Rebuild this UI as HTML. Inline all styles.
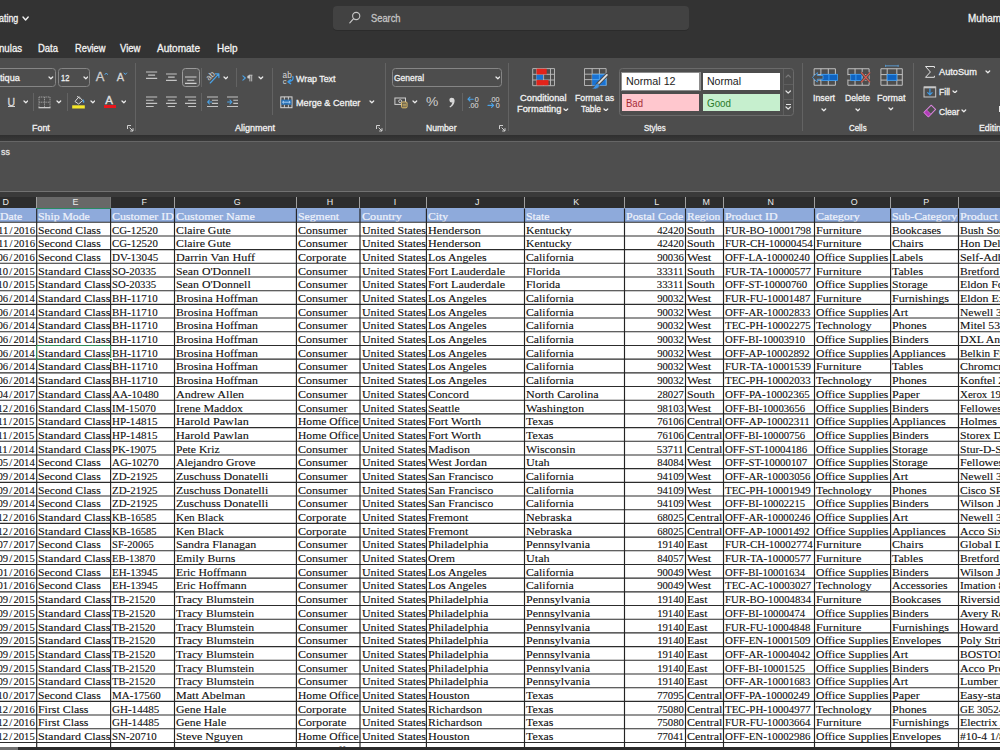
<!DOCTYPE html>
<html><head><meta charset="utf-8"><title>Excel</title><style>*{box-sizing:border-box}
html,body{margin:0;padding:0}
body{width:1000px;height:750px;overflow:hidden;background:#333333;position:relative;font-family:"Liberation Sans",sans-serif;color:#fff}
#colhdr{position:absolute;left:0;top:196.5px;width:1000px;height:12px;background:#2d2d2d;overflow:hidden}
.ch{position:absolute;top:0;height:12px;border-right:1px solid #a0a0a0;color:#ececec;font-size:8.9px;line-height:11.6px;text-align:center;padding-left:4px}
.ch.sel{background:#686868;border-bottom:1.5px solid #2e8b63;border-right-color:#777}
#grid{position:absolute;left:0;top:0;width:1000px;height:747.5px;overflow:hidden;pointer-events:none}
.c{position:absolute;overflow:hidden;white-space:nowrap;font-family:"Liberation Serif",serif;font-size:11.15px;line-height:14px;color:#0c0c0c;-webkit-text-stroke:0.1px #222}
.c.h{color:#eef2fb;-webkit-text-stroke:0.2px #eef2fb}
.t{position:absolute;left:1.3px;display:inline-block;transform-origin:0 50%}
.t.r{left:auto;right:1.6px;transform-origin:100% 50%}
#sheet{position:absolute;left:0;width:1000px;background:#fff}
#hrow{position:absolute;left:0;width:1000px;background:#8eaadb}
#lines{position:absolute;left:0;top:0}
#selbox{position:absolute;left:35.6px;top:344.8px;width:75.6px;height:15.4px;border:1.4px solid #2e8b57;border-right-width:1.9px}
#selh{position:absolute;left:109.2px;top:358px;width:3.6px;height:3.6px;background:#2e8b57;border:0.6px solid #fff}
#botbar{position:absolute;left:0;top:747.3px;width:1000px;height:2.7px;background:#2b2b2b}
#botl{position:absolute;left:0;top:0;width:18px;height:2.7px;background:#707070}
.ab{position:absolute}
.lb{position:absolute;white-space:nowrap;line-height:16px;-webkit-text-stroke:0.3px currentColor;transform-origin:0 50%;display:inline-block}
#titlebar{position:absolute;left:0;top:0;width:1000px;height:59px;background:#333333}
#ribbon{position:absolute;left:0;top:58px;width:1000px;height:77px;background:#4d4d4d}
#rshadow{position:absolute;left:0;top:135px;width:1000px;height:6.3px;background:linear-gradient(#2f2f2f,#383838)}
#fbar{position:absolute;left:0;top:141.3px;width:1000px;height:51px;background:#4e4e4e;border-top:1px solid #666;border-bottom:1px solid #727272}
#fgap{position:absolute;left:0;top:192px;width:1000px;height:5px;background:#3a3a3a}
.box{border:1px solid #858585;border-radius:3.5px}
#selline{position:absolute;left:36.2px;top:207.5px;width:74.9px;height:1.5px;background:#2a8a62}
</style></head><body>
<div id="titlebar"></div><div id="ribbon"></div><div id="rshadow"></div><div id="fbar"></div><div id="fgap"></div>
<div class="ab" style="left:333px;top:6px;width:356px;height:23.8px;background:#424242;border-radius:4px;box-shadow:0 0.8px 0.5px #2a2a2a"></div>
<svg class="ab" style="left:348px;top:10px" width="14" height="16" viewBox="0 0 14 16"><circle cx="8.2" cy="6" r="3.6" fill="none" stroke="#c8c8c8" stroke-width="1.1"/><path d="M5.6 8.7 L1.8 12.8" stroke="#c8c8c8" stroke-width="1.2" stroke-linecap="round"/></svg>
<svg class="ab" style="left:22.4px;top:16.0px" width="7.2" height="5.0"><path d="M1 1 L3.60 4.00 L6.20 1" fill="none" stroke="#f0f0f0" stroke-width="1.4" stroke-linecap="round" stroke-linejoin="round"/></svg>
<div class="ab box" style="left:-10px;top:68px;width:65.5px;height:18.6px"></div>
<svg class="ab" style="left:48.2px;top:76.0px" width="5.7" height="3.8"><path d="M1 1 L2.85 2.75 L4.70 1" fill="none" stroke="#ececec" stroke-width="1.25" stroke-linecap="round" stroke-linejoin="round"/></svg>
<div class="ab box" style="left:58.1px;top:68px;width:32.3px;height:18.6px"></div>
<svg class="ab" style="left:82.6px;top:76.0px" width="5.7" height="3.8"><path d="M1 1 L2.85 2.75 L4.70 1" fill="none" stroke="#ececec" stroke-width="1.25" stroke-linecap="round" stroke-linejoin="round"/></svg>
<span class="lb" style="left:95.8px;top:69px;font-size:13px;color:#cfcfcf;line-height:16px">A</span>
<svg class="ab" style="left:103.5px;top:71.5px" width="4.6" height="3.5"><path d="M1 2.50 L2.30 1 L3.60 2.50" fill="none" stroke="#58aef0" stroke-width="1" stroke-linecap="round" stroke-linejoin="round"/></svg>
<span class="lb" style="left:116.8px;top:70px;font-size:11px;color:#d8d8d8;line-height:14px">A</span>
<svg class="ab" style="left:123.2px;top:71.8px" width="4.6" height="3.5"><path d="M1 1 L2.30 2.50 L3.60 1" fill="none" stroke="#58aef0" stroke-width="1" stroke-linecap="round" stroke-linejoin="round"/></svg>
<span class="lb" style="left:7.4px;top:93.6px;font-size:10.5px;color:#d8d8d8;line-height:16px">U</span>
<div class="ab" style="left:7.6px;top:106px;width:7px;height:1px;background:#d0d0d0"></div>
<svg class="ab" style="left:22.6px;top:99.9px" width="5.7" height="3.8"><path d="M1 1 L2.85 2.75 L4.70 1" fill="none" stroke="#ececec" stroke-width="1.25" stroke-linecap="round" stroke-linejoin="round"/></svg>
<div class="ab" style="left:33.1px;top:93px;width:1px;height:18px;background:#636363"></div>
<svg class="ab" style="left:38.4px;top:95.6px" width="13" height="13" viewBox="0 0 13 13"><path d="M1 1 H12 M1 6.2 H12 M1 1 V11.6 M6.5 1 V11.6 M12 1 V11.6" fill="none" stroke="#9a9a9a" stroke-width="1" stroke-dasharray="1.2 0.6"/><path d="M0.5 11.7 H12.5" stroke="#d8d8d8" stroke-width="1.2"/></svg>
<svg class="ab" style="left:55.9px;top:99.9px" width="5.7" height="3.8"><path d="M1 1 L2.85 2.75 L4.70 1" fill="none" stroke="#ececec" stroke-width="1.25" stroke-linecap="round" stroke-linejoin="round"/></svg>
<div class="ab" style="left:67.3px;top:93px;width:1px;height:18px;background:#636363"></div>
<svg class="ab" style="left:72px;top:94.5px" width="14" height="15" viewBox="0 0 14 15"><path d="M3 6.5 L7 1.6 L10.6 5.6 L6.6 9 Z" fill="none" stroke="#d8d8d8" stroke-width="1"/><path d="M5.2 1.2 L7.6 3.6" stroke="#d8d8d8" stroke-width="1"/><path d="M11.2 4.6 Q12.6 6.6 11.8 7.8 Q10.6 7.6 11.2 4.6" fill="#4aa3e8" stroke="#4aa3e8" stroke-width="0.6"/><rect x="0.2" y="10.3" width="12.6" height="3.2" fill="#f5e72a"/></svg>
<svg class="ab" style="left:89.7px;top:99.9px" width="5.7" height="3.8"><path d="M1 1 L2.85 2.75 L4.70 1" fill="none" stroke="#ececec" stroke-width="1.25" stroke-linecap="round" stroke-linejoin="round"/></svg>
<span class="lb" style="left:105.2px;top:92.2px;font-size:11.5px;color:#e0e0e0;line-height:16px">A</span>
<div class="ab" style="left:103.6px;top:104.8px;width:12.4px;height:3.2px;background:#e8161c"></div>
<svg class="ab" style="left:120.7px;top:99.9px" width="5.7" height="3.8"><path d="M1 1 L2.85 2.75 L4.70 1" fill="none" stroke="#ececec" stroke-width="1.25" stroke-linecap="round" stroke-linejoin="round"/></svg>
<svg class="ab" style="left:126.5px;top:124.6px" width="7" height="7" viewBox="0 0 7 7"><path d="M0.5 4 V0.5 H4" fill="none" stroke="#d0d0d0" stroke-width="1"/><path d="M2.6 2.6 L6 6 M6 3.2 V6 H3.2" fill="none" stroke="#d0d0d0" stroke-width="1"/></svg>
<div class="ab" style="left:135.1px;top:63px;width:1px;height:68px;background:#636363"></div>
<svg class="ab" style="left:144.80px;top:69.60px" width="13.20" height="10.30"><path d="M1.00 2.00 H12.20 M3.10 5.10 H10.10 M1.00 8.30 H12.20" stroke="#c4c4c4" stroke-width="1.15" fill="none"/></svg>
<svg class="ab" style="left:164.80px;top:72.00px" width="12.80" height="10.30"><path d="M1.00 2.00 H11.80 M3.10 5.10 H9.70 M1.00 8.30 H11.80" stroke="#c4c4c4" stroke-width="1.15" fill="none"/></svg>
<div class="ab box" style="left:182.2px;top:68px;width:17.5px;height:18.6px;border-color:#9a9a9a;background:#555"></div>
<svg class="ab" style="left:184.00px;top:75.10px" width="13.50" height="10.30"><path d="M1.00 2.00 H12.50 M3.20 5.20 H10.30 M1.00 8.30 H12.50" stroke="#d0d0d0" stroke-width="1.15" fill="none"/></svg>
<div class="ab" style="left:201.3px;top:68px;width:1px;height:18.5px;background:#636363"></div>
<svg class="ab" style="left:206px;top:70px" width="15" height="15" viewBox="0 0 15 15"><path d="M4.2 13 L12.6 4.2 M9.2 3.9 H12.9 V7.6" fill="none" stroke="#4aa3e8" stroke-width="1.15" stroke-linecap="round" stroke-linejoin="round"/><g transform="rotate(-45 5 6)"><text x="0" y="8.2" font-family="Liberation Sans" font-size="8.2" fill="#d2d2d2">ab</text></g></svg>
<svg class="ab" style="left:222.8px;top:76.0px" width="5.7" height="3.8"><path d="M1 1 L2.85 2.75 L4.70 1" fill="none" stroke="#ececec" stroke-width="1.25" stroke-linecap="round" stroke-linejoin="round"/></svg>
<div class="ab" style="left:235.6px;top:68px;width:1px;height:18.5px;background:#636363"></div>
<svg class="ab" style="left:241.5px;top:73.5px" width="12" height="9" viewBox="0 0 12 9"><path d="M0.9 1.9 L3.3 4 L0.9 6.1" fill="none" stroke="#4aa3e8" stroke-width="1.1" stroke-linecap="round" stroke-linejoin="round"/><path d="M7.9 1.2 H6.9 A1.7 1.7 0 0 0 6.9 4.6 H7.9 Z" fill="#cfcfcf"/><path d="M7.9 1.2 V7.4 M9.7 1.2 V7.4 M7 1.2 H10.4" fill="none" stroke="#cfcfcf" stroke-width="0.85"/></svg>
<svg class="ab" style="left:258.3px;top:76.0px" width="5.7" height="3.8"><path d="M1 1 L2.85 2.75 L4.70 1" fill="none" stroke="#ececec" stroke-width="1.25" stroke-linecap="round" stroke-linejoin="round"/></svg>
<div class="ab" style="left:272.0px;top:67.7px;width:1px;height:46.89999999999999px;background:#636363"></div>
<svg class="ab" style="left:144.80px;top:94.70px" width="13.20" height="13.50"><path d="M1.00 2.00 H12.20 M1.00 5.20 H8.70 M1.00 8.30 H12.20 M1.00 11.50 H8.70" stroke="#c4c4c4" stroke-width="1.15" fill="none"/></svg>
<svg class="ab" style="left:164.80px;top:94.70px" width="12.80" height="13.50"><path d="M1.00 2.00 H11.80 M2.70 5.20 H10.10 M1.00 8.30 H11.80 M2.70 11.50 H10.10" stroke="#c4c4c4" stroke-width="1.15" fill="none"/></svg>
<svg class="ab" style="left:184.40px;top:94.70px" width="13.10" height="13.50"><path d="M1.00 2.00 H12.10 M4.10 5.20 H12.10 M1.00 8.30 H12.10 M4.10 11.50 H12.10" stroke="#c4c4c4" stroke-width="1.15" fill="none"/></svg>
<div class="ab" style="left:201.3px;top:93px;width:1px;height:18px;background:#636363"></div>
<svg class="ab" style="left:206.40px;top:94.70px" width="13.00" height="13.50"><path d="M1.00 2.00 H12.00 M5.90 5.20 H12.00 M5.90 8.30 H12.00 M1.00 11.50 H12.00" stroke="#c4c4c4" stroke-width="1.15" fill="none"/></svg>
<svg class="ab" style="left:207px;top:98.5px" width="6" height="6" viewBox="0 0 6 6"><path d="M0.6 3 H4.8 M2.4 1 L0.6 3 L2.4 5" fill="none" stroke="#4aa3e8" stroke-width="1.1" stroke-linecap="round" stroke-linejoin="round"/></svg>
<svg class="ab" style="left:226.00px;top:94.70px" width="13.00" height="13.50"><path d="M1.00 2.00 H12.00 M7.30 5.20 H12.00 M7.30 8.30 H12.00 M1.00 11.50 H12.00" stroke="#c4c4c4" stroke-width="1.15" fill="none"/></svg>
<svg class="ab" style="left:226.6px;top:98.5px" width="6" height="6" viewBox="0 0 6 6"><path d="M0.6 3 H4.8 M3 1 L4.8 3 L3 5" fill="none" stroke="#4aa3e8" stroke-width="1.1" stroke-linecap="round" stroke-linejoin="round"/></svg>
<svg class="ab" style="left:281.5px;top:71px" width="14" height="15" viewBox="0 0 14 15"><text x="0.6" y="7" font-family="Liberation Sans" font-size="8.2" fill="#d8d8d8">ab</text><text x="0.7" y="13" font-family="Liberation Sans" font-size="7.6" fill="#d8d8d8">c</text><path d="M10.8 5.6 Q12.4 9.6 6.6 10.9 M8.4 8.8 L6 10.9 L8.6 12.7" fill="none" stroke="#3f9be6" stroke-width="1.4" stroke-linecap="round" stroke-linejoin="round"/></svg>
<svg class="ab" style="left:280px;top:95.5px" width="13" height="13" viewBox="0 0 13 13"><rect x="0.8" y="0.9" width="11.2" height="10.8" fill="none" stroke="#d8d8d8" stroke-width="1"/><rect x="1.3" y="3.6" width="10.2" height="5.2" fill="#2a72b5"/><path d="M4.4 0.9 V3.6 M8.4 0.9 V3.6 M4.4 8.8 V11.7 M8.4 8.8 V11.7" stroke="#d8d8d8" stroke-width="0.9"/><path d="M2.6 6.2 H10.2 M4 4.9 L2.6 6.2 L4 7.5 M8.8 4.9 L10.2 6.2 L8.8 7.5" fill="none" stroke="#bfe0ff" stroke-width="0.8"/></svg>
<svg class="ab" style="left:369.4px;top:100.4px" width="5.7" height="3.8"><path d="M1 1 L2.85 2.75 L4.70 1" fill="none" stroke="#ececec" stroke-width="1.25" stroke-linecap="round" stroke-linejoin="round"/></svg>
<svg class="ab" style="left:375.8px;top:124.6px" width="7" height="7" viewBox="0 0 7 7"><path d="M0.5 4 V0.5 H4" fill="none" stroke="#d0d0d0" stroke-width="1"/><path d="M2.6 2.6 L6 6 M6 3.2 V6 H3.2" fill="none" stroke="#d0d0d0" stroke-width="1"/></svg>
<div class="ab" style="left:385.0px;top:63px;width:1px;height:68px;background:#636363"></div>
<div class="ab box" style="left:391.7px;top:68px;width:110.8px;height:18.6px"></div>
<svg class="ab" style="left:494.8px;top:76.0px" width="5.7" height="3.8"><path d="M1 1 L2.85 2.75 L4.70 1" fill="none" stroke="#ececec" stroke-width="1.25" stroke-linecap="round" stroke-linejoin="round"/></svg>
<svg class="ab" style="left:394px;top:96.8px" width="14" height="12" viewBox="0 0 14 12"><rect x="0.9" y="1" width="10.6" height="6.4" fill="none" stroke="#d0d0d0" stroke-width="1"/><circle cx="6.2" cy="4.2" r="1.5" fill="none" stroke="#d0d0d0" stroke-width="0.9"/><rect x="7.6" y="5" width="5.4" height="5.8" rx="1" fill="#4d4d4d" stroke="#e8c46a" stroke-width="1"/><path d="M8.6 7.2 H12 M8.6 8.9 H12" stroke="#e8c46a" stroke-width="0.9"/></svg>
<svg class="ab" style="left:412.1px;top:99.9px" width="5.7" height="3.8"><path d="M1 1 L2.85 2.75 L4.70 1" fill="none" stroke="#ececec" stroke-width="1.25" stroke-linecap="round" stroke-linejoin="round"/></svg>
<span class="lb" style="left:425.6px;top:92.8px;font-size:13.6px;color:#cdcdcd;line-height:18px;transform:scaleX(1.02);-webkit-text-stroke:0">%</span>
<svg class="ab" style="left:447.5px;top:96.5px" width="9" height="12" viewBox="0 0 9 12"><path d="M3.8 0.8 A2.3 2.3 0 1 0 4.4 5.3 Q3.8 8.4 1.4 9.8 L2.2 10.6 Q7 7.8 6.6 3 Q6.2 0.8 3.8 0.8Z" fill="#d8d8d8"/></svg>
<div class="ab" style="left:462.0px;top:93px;width:1px;height:18px;background:#636363"></div>
<svg class="ab" style="left:467px;top:95.5px" width="13" height="13" viewBox="0 0 13 13"><path d="M1 3.2 H6.2 M3 1.2 L1 3.2 L3 5.2" fill="none" stroke="#4aa3e8" stroke-width="1.1" stroke-linecap="round" stroke-linejoin="round"/><text x="7.8" y="5.8" font-family="Liberation Sans" font-size="7.2" fill="#e2e2e2">0</text><text x="1.6" y="11.9" font-family="Liberation Sans" font-size="7.2" fill="#e2e2e2">.00</text></svg>
<svg class="ab" style="left:486.5px;top:95.5px" width="14" height="13" viewBox="0 0 14 13"><text x="2.6" y="5.8" font-family="Liberation Sans" font-size="7.2" fill="#e2e2e2">.00</text><path d="M1 9.4 H6.6 M4.6 7.4 L6.6 9.4 L4.6 11.4" fill="none" stroke="#4aa3e8" stroke-width="1.1" stroke-linecap="round" stroke-linejoin="round"/><text x="8.8" y="11.9" font-family="Liberation Sans" font-size="7.2" fill="#e2e2e2">0</text></svg>
<svg class="ab" style="left:499px;top:124.6px" width="7" height="7" viewBox="0 0 7 7"><path d="M0.5 4 V0.5 H4" fill="none" stroke="#d0d0d0" stroke-width="1"/><path d="M2.6 2.6 L6 6 M6 3.2 V6 H3.2" fill="none" stroke="#d0d0d0" stroke-width="1"/></svg>
<div class="ab" style="left:508.0px;top:63px;width:1px;height:68px;background:#636363"></div>
<svg class="ab" style="left:531.5px;top:67.5px" width="24" height="19" viewBox="0 0 24 19"><path d="M0.7 0.6 H22.5 V17.7 H0.7 Z M0.7 6.3 H22.5 M0.7 12 H22.5 M4.75 0.6 V17.7 M11.6 0.6 V17.7 M18.5 0.6 V17.7" fill="none" stroke="#bdbdbd" stroke-width="0.9"/><rect x="4.5" y="0.7" width="10.2" height="5.7" fill="#e2231a"/><rect x="4.5" y="6.9" width="6.6" height="4.7" fill="#1a73d4"/><rect x="4.5" y="12.1" width="12" height="5.2" fill="#e2231a"/></svg>
<svg class="ab" style="left:563.4px;top:107.7px" width="5.7" height="3.8"><path d="M1 1 L2.85 2.75 L4.70 1" fill="none" stroke="#ececec" stroke-width="1.25" stroke-linecap="round" stroke-linejoin="round"/></svg>
<svg class="ab" style="left:583.5px;top:67.5px" width="25" height="22" viewBox="0 0 25 22"><path d="M0.5 0.6 H22.1 V17.5 H0.5 Z M0.5 6.2 H22.1 M0.5 11.6 H22.1 M8.15 0.6 V17.5 M15.4 0.6 V17.5" fill="none" stroke="#bdbdbd" stroke-width="0.9"/><rect x="8.2" y="6.3" width="13.9" height="11.2" fill="#1a73d4"/><path d="M8.2 11.6 H22.1 M15.4 6.3 V17.5 M8.2 6.3 H22.1 V17.5" fill="none" stroke="#58adf5" stroke-width="0.8"/><path d="M22.9 6.8 L13.6 16.4" stroke="#4d4d4d" stroke-width="3.8" stroke-linecap="round"/><path d="M22.9 6.8 L14 16" stroke="#e2e2e2" stroke-width="1.7" stroke-linecap="round"/><path d="M14.2 15.4 Q11 15.6 10.6 18.4 Q9.8 19.9 7.6 20.4 Q12 22 14.6 19.4 Q16.2 17.4 14.2 15.4Z" fill="#3d94ea" stroke="#4d4d4d" stroke-width="0.5"/></svg>
<svg class="ab" style="left:603.1px;top:107.7px" width="5.7" height="3.8"><path d="M1 1 L2.85 2.75 L4.70 1" fill="none" stroke="#ececec" stroke-width="1.25" stroke-linecap="round" stroke-linejoin="round"/></svg>
<div class="ab box" style="left:619px;top:68px;width:174.8px;height:47.6px;border-color:#6a6a6a"></div>
<div class="ab" style="left:621px;top:71.6px;width:79.6px;height:19.4px;background:#8c8c8c"></div>
<div class="ab" style="left:622.4px;top:73px;width:77px;height:16.6px;background:#fff"></div>
<div class="ab" style="left:703px;top:73px;width:77px;height:16.6px;background:#fff"></div>
<div class="ab" style="left:622.4px;top:94px;width:77px;height:16.6px;background:#ffc7ce"></div>
<div class="ab" style="left:703px;top:94px;width:77px;height:16.6px;background:#c6efce"></div>
<div class="ab" style="left:783.1px;top:68.5px;width:1px;height:46.7px;background:#5e5e5e"></div>
<div class="ab" style="left:784px;top:83.7px;width:9.4px;height:1px;background:#5e5e5e"></div>
<div class="ab" style="left:784px;top:98.8px;width:9.4px;height:1px;background:#5e5e5e"></div>
<svg class="ab" style="left:785.4px;top:73.9px" width="6.4" height="4.2"><path d="M1 3.20 L3.20 1 L5.40 3.20" fill="none" stroke="#7a7a7a" stroke-width="1.1" stroke-linecap="round" stroke-linejoin="round"/></svg>
<svg class="ab" style="left:785.4px;top:89.7px" width="6.4" height="4.2"><path d="M1 1 L3.20 3.20 L5.40 1" fill="none" stroke="#e0e0e0" stroke-width="1.2" stroke-linecap="round" stroke-linejoin="round"/></svg>
<div class="ab" style="left:786.2px;top:104.4px;width:4.8px;height:1px;background:#e0e0e0"></div>
<svg class="ab" style="left:785.4px;top:105.7px" width="6.4" height="4.2"><path d="M1 1 L3.20 3.20 L5.40 1" fill="none" stroke="#e0e0e0" stroke-width="1.2" stroke-linecap="round" stroke-linejoin="round"/></svg>
<div class="ab" style="left:801.9px;top:63px;width:1px;height:68px;background:#636363"></div>
<svg class="ab" style="left:811.5px;top:67.5px" width="27" height="19" viewBox="0 0 27 19"><path d="M2.1 0.75 H23.4 V17.25 H2.1 Z M2.1 6.6 H23.4 M2.1 12.1 H23.4 M8.9 0.75 V17.25 M16.3 0.75 V17.25" fill="none" stroke="#c6c6c6" stroke-width="0.95"/><rect x="9.6" y="6.3" width="15.8" height="6.1" fill="#0f63c0" stroke="#3a9df5" stroke-width="0.8"/><path d="M16.9 6.6 V12.1" stroke="#3a9df5" stroke-width="0.9"/><path d="M0.5 9.35 L5.3 4.5 V7.5 H11 V11.2 H5.3 V14.2 Z" fill="#4d4d4d" stroke="#4a98dc" stroke-width="0.9" stroke-linejoin="round"/></svg>
<svg class="ab" style="left:821.1px;top:107.9px" width="5.7" height="3.8"><path d="M1 1 L2.85 2.75 L4.70 1" fill="none" stroke="#ececec" stroke-width="1.25" stroke-linecap="round" stroke-linejoin="round"/></svg>
<svg class="ab" style="left:846.5px;top:67.5px" width="25" height="19" viewBox="0 0 25 19"><path d="M0.9 0.75 H22.1 V17.25 H0.9 Z M0.9 6.6 H22.1 M0.9 12.1 H22.1 M8.05 0.75 V17.25 M15.2 0.75 V17.25" fill="none" stroke="#c6c6c6" stroke-width="0.95"/><rect x="0" y="7.2" width="3.4" height="4.3" fill="#4d4d4d"/><rect x="3.7" y="6.3" width="11" height="6.1" fill="#0f63c0" stroke="#3a9df5" stroke-width="0.8"/><path d="M8.9 6.6 V12.1" stroke="#3a9df5" stroke-width="0.9"/><path d="M14.6 4.8 L22.8 13.8 M22.8 4.8 L14.6 13.8" stroke="#4d4d4d" stroke-width="2.8"/><path d="M14.6 4.8 L22.8 13.8 M22.8 4.8 L14.6 13.8" stroke="#e25a4e" stroke-width="1.15" stroke-linecap="round"/></svg>
<svg class="ab" style="left:854.6px;top:107.9px" width="5.7" height="3.8"><path d="M1 1 L2.85 2.75 L4.70 1" fill="none" stroke="#ececec" stroke-width="1.25" stroke-linecap="round" stroke-linejoin="round"/></svg>
<svg class="ab" style="left:879.5px;top:63.5px" width="24" height="23" viewBox="0 0 24 23"><path d="M5.6 1.85 H18.2 M5.6 0.8 V2.9 M18.2 0.8 V2.9" stroke="#5a9fd8" stroke-width="0.9" fill="none"/><path d="M0.9 4.75 H22.3 V21.25 H0.9 Z M0.9 10.6 H22.3 M0.9 16.1 H22.3 M7.2 4.75 V21.25 M16.85 4.75 V21.25" fill="none" stroke="#c6c6c6" stroke-width="0.95"/><rect x="7.2" y="10.4" width="9.65" height="5.9" fill="#0f63c0" stroke="#3a9df5" stroke-width="0.8"/></svg>
<svg class="ab" style="left:888.1px;top:106.9px" width="5.7" height="3.8"><path d="M1 1 L2.85 2.75 L4.70 1" fill="none" stroke="#ececec" stroke-width="1.25" stroke-linecap="round" stroke-linejoin="round"/></svg>
<div class="ab" style="left:913.1px;top:63px;width:1px;height:68px;background:#636363"></div>
<svg class="ab" style="left:923.5px;top:64.5px" width="12" height="14" viewBox="0 0 12 14"><path d="M10.4 3 V1.5 H1.5 L6.4 7 L1.5 12.3 H10.4 V10.8" fill="none" stroke="#e4e4e4" stroke-width="1" stroke-linejoin="miter"/></svg>
<svg class="ab" style="left:985.2px;top:69.9px" width="5.7" height="3.8"><path d="M1 1 L2.85 2.75 L4.70 1" fill="none" stroke="#ececec" stroke-width="1.25" stroke-linecap="round" stroke-linejoin="round"/></svg>
<svg class="ab" style="left:922.5px;top:85.5px" width="14" height="12" viewBox="0 0 14 12"><rect x="1" y="1" width="11.7" height="10" fill="none" stroke="#c8c8c8" stroke-width="1"/><path d="M1 1.4 H12.7" stroke="#c8c8c8" stroke-width="1.8"/><path d="M6.9 2.8 V8.6 M4.7 6.6 L6.9 8.8 L9.1 6.6" fill="none" stroke="#3f9be6" stroke-width="1.2" stroke-linecap="round" stroke-linejoin="round"/></svg>
<svg class="ab" style="left:951.9px;top:89.5px" width="5.7" height="3.8"><path d="M1 1 L2.85 2.75 L4.70 1" fill="none" stroke="#ececec" stroke-width="1.25" stroke-linecap="round" stroke-linejoin="round"/></svg>
<svg class="ab" style="left:922.5px;top:104px" width="14" height="14" viewBox="0 0 14 14"><path d="M8.2 1.2 L12.6 5.4 L5.4 12.8 L1 8.4 Z" fill="none" stroke="#d884dc" stroke-width="1.05" stroke-linejoin="round"/><path d="M3.6 5.9 L7.9 10.2 L5.4 12.8 L1 8.4 Z" fill="#b23cba" stroke="#d884dc" stroke-width="0.6"/></svg>
<svg class="ab" style="left:960.9px;top:109.3px" width="5.7" height="3.8"><path d="M1 1 L2.85 2.75 L4.70 1" fill="none" stroke="#ececec" stroke-width="1.25" stroke-linecap="round" stroke-linejoin="round"/></svg>
<div class="ab" style="left:998.9px;top:105.6px;width:1.3px;height:6.8px;background:#e8e8e8"></div>
<span class="lb" style="left:-1.5px;top:10.70px;font-size:10.1px;color:#f2f2f2;transform:scaleX(0.882)">ating</span>
<span class="lb" style="left:370.5px;top:10.80px;font-size:10.1px;color:#c4c4c4;transform:scaleX(0.922)">Search</span>
<span class="lb" style="left:968.0px;top:10.70px;font-size:10.1px;color:#f2f2f2;transform:scaleX(0.980)">Muham</span>
<span class="lb" style="left:-1.5px;top:40.50px;font-size:10.1px;color:#f2f2f2;transform:scaleX(0.957)">nulas</span>
<span class="lb" style="left:38.2px;top:40.50px;font-size:10.1px;color:#f2f2f2;transform:scaleX(0.938)">Data</span>
<span class="lb" style="left:74.5px;top:40.50px;font-size:10.1px;color:#f2f2f2;transform:scaleX(0.921)">Review</span>
<span class="lb" style="left:120.0px;top:40.50px;font-size:10.1px;color:#f2f2f2;transform:scaleX(0.945)">View</span>
<span class="lb" style="left:157.0px;top:40.50px;font-size:10.1px;color:#f2f2f2;transform:scaleX(0.995)">Automate</span>
<span class="lb" style="left:216.5px;top:40.50px;font-size:10.1px;color:#f2f2f2;transform:scaleX(0.987)">Help</span>
<span class="lb" style="left:-0.5px;top:70.37px;font-size:9.6px;color:#f2f2f2;transform:scaleX(0.951)">tiqua</span>
<span class="lb" style="left:61.0px;top:70.37px;font-size:9.6px;color:#f2f2f2;transform:scaleX(0.778)">12</span>
<span class="lb" style="left:31.5px;top:120.38px;font-size:9.3px;color:#f2f2f2;transform:scaleX(0.957)">Font</span>
<span class="lb" style="left:234.5px;top:120.38px;font-size:9.3px;color:#f2f2f2;transform:scaleX(0.970)">Alignment</span>
<span class="lb" style="left:296.0px;top:70.57px;font-size:9.6px;color:#f2f2f2;transform:scaleX(0.922)">Wrap Text</span>
<span class="lb" style="left:296.0px;top:94.87px;font-size:9.6px;color:#f2f2f2;transform:scaleX(0.950)">Merge &amp; Center</span>
<span class="lb" style="left:394.1px;top:70.37px;font-size:9.6px;color:#f2f2f2;transform:scaleX(0.882)">General</span>
<span class="lb" style="left:425.6px;top:120.38px;font-size:9.3px;color:#f2f2f2;transform:scaleX(0.922)">Number</span>
<span class="lb" style="left:519.7px;top:89.67px;font-size:9.6px;color:#f2f2f2;transform:scaleX(0.971)">Conditional</span>
<span class="lb" style="left:516.6px;top:101.47px;font-size:9.6px;color:#f2f2f2;transform:scaleX(0.968)">Formatting</span>
<span class="lb" style="left:575.0px;top:89.67px;font-size:9.6px;color:#f2f2f2;transform:scaleX(0.908)">Format as</span>
<span class="lb" style="left:581.0px;top:101.47px;font-size:9.6px;color:#f2f2f2;transform:scaleX(0.872)">Table</span>
<span class="lb" style="left:626.4px;top:72.99px;font-size:10.7px;color:#1c1c1c;-webkit-text-stroke:0;transform:scaleX(1.006)">Normal 12</span>
<span class="lb" style="left:707.0px;top:72.99px;font-size:10.7px;color:#1c1c1c;-webkit-text-stroke:0;transform:scaleX(0.987)">Normal</span>
<span class="lb" style="left:626.0px;top:94.59px;font-size:10.7px;color:#a52a35;-webkit-text-stroke:0;transform:scaleX(0.893)">Bad</span>
<span class="lb" style="left:707.0px;top:94.59px;font-size:10.7px;color:#2a7a2a;-webkit-text-stroke:0;transform:scaleX(0.918)">Good</span>
<span class="lb" style="left:644.4px;top:120.38px;font-size:9.3px;color:#f2f2f2;transform:scaleX(0.853)">Styles</span>
<span class="lb" style="left:813.0px;top:89.77px;font-size:9.6px;color:#f2f2f2;transform:scaleX(0.917)">Insert</span>
<span class="lb" style="left:845.0px;top:89.77px;font-size:9.6px;color:#f2f2f2;transform:scaleX(0.901)">Delete</span>
<span class="lb" style="left:877.0px;top:89.77px;font-size:9.6px;color:#f2f2f2;transform:scaleX(0.934)">Format</span>
<span class="lb" style="left:849.0px;top:120.38px;font-size:9.3px;color:#f2f2f2;transform:scaleX(0.851)">Cells</span>
<span class="lb" style="left:938.6px;top:63.97px;font-size:9.6px;color:#f2f2f2;transform:scaleX(0.958)">AutoSum</span>
<span class="lb" style="left:938.8px;top:83.97px;font-size:9.6px;color:#f2f2f2;transform:scaleX(0.897)">Fill</span>
<span class="lb" style="left:938.8px;top:103.57px;font-size:9.6px;color:#f2f2f2;transform:scaleX(0.889)">Clear</span>
<span class="lb" style="left:978.6px;top:120.38px;font-size:9.3px;color:#f2f2f2;transform:scaleX(0.946)">Editing</span>
<span class="lb" style="left:0.5px;top:143.67px;font-size:9.6px;color:#e4e4e4;transform:scaleX(0.917)">ss</span>
<div id="colhdr">
<div class="ch" style="left:-40px;width:77.2px"><span style="position:absolute;left:42.4px">D</span></div>
<div class="ch sel" style="left:36.7px;width:74.4px">E</div>
<div class="ch" style="left:110.6px;width:64.4px">F</div>
<div class="ch" style="left:174.5px;width:122.4px">G</div>
<div class="ch" style="left:296.4px;width:64.1px">H</div>
<div class="ch" style="left:360.0px;width:66.9px">I</div>
<div class="ch" style="left:426.4px;width:98.6px">J</div>
<div class="ch" style="left:524.5px;width:100.5px">K</div>
<div class="ch" style="left:624.5px;width:61.5px">L</div>
<div class="ch" style="left:685.5px;width:38.5px">M</div>
<div class="ch" style="left:723.5px;width:91.5px">N</div>
<div class="ch" style="left:814.5px;width:76.6px">O</div>
<div class="ch" style="left:890.6px;width:68.4px">P</div>
<div class="ch" style="left:958.5px;width:141.5px"></div>
</div>
<div id="grid">
<div id="sheet" style="top:208.4px;height:538.9px"></div>
<div id="hrow" style="top:208.4px;height:13.85px"></div>
<div class="c h" style="left:-39.5px;top:208.40px;width:75.7px;height:13.85px"><span class="t r" style="top:0.64px;right:14.4px;transform:scaleX(1.055)">Ship Date</span></div>
<div class="c h" style="left:37.2px;top:208.40px;width:72.9px;height:13.85px"><span class="t" style="top:0.64px;transform:scaleX(1.052)">Ship Mode</span></div>
<div class="c h" style="left:111.1px;top:208.40px;width:62.9px;height:13.85px"><span class="t" style="top:0.64px;transform:scaleX(1.067)">Customer ID</span></div>
<div class="c h" style="left:175.0px;top:208.40px;width:120.9px;height:13.85px"><span class="t" style="top:0.64px;transform:scaleX(1.083)">Customer Name</span></div>
<div class="c h" style="left:296.9px;top:208.40px;width:62.6px;height:13.85px"><span class="t" style="top:0.64px;transform:scaleX(1.052)">Segment</span></div>
<div class="c h" style="left:360.5px;top:208.40px;width:65.4px;height:13.85px"><span class="t" style="top:0.64px;transform:scaleX(1.090)">Country</span></div>
<div class="c h" style="left:426.9px;top:208.40px;width:97.1px;height:13.85px"><span class="t" style="top:0.64px;transform:scaleX(1.053)">City</span></div>
<div class="c h" style="left:525.0px;top:208.40px;width:99.0px;height:13.85px"><span class="t" style="top:0.64px;transform:scaleX(1.053)">State</span></div>
<div class="c h" style="left:625.0px;top:208.40px;width:60.0px;height:13.85px"><span class="t" style="top:0.64px;transform:scaleX(1.070)">Postal Code</span></div>
<div class="c h" style="left:686.0px;top:208.40px;width:37.0px;height:13.85px"><span class="t" style="top:0.64px;transform:scaleX(1.035)">Region</span></div>
<div class="c h" style="left:724.0px;top:208.40px;width:90.0px;height:13.85px"><span class="t" style="top:0.64px;transform:scaleX(1.068)">Product ID</span></div>
<div class="c h" style="left:815.0px;top:208.40px;width:75.1px;height:13.85px"><span class="t" style="top:0.64px;transform:scaleX(1.070)">Category</span></div>
<div class="c h" style="left:891.1px;top:208.40px;width:66.9px;height:13.85px"><span class="t" style="top:0.64px;transform:scaleX(1.053)">Sub-Category</span></div>
<div class="c h" style="left:959.0px;top:208.40px;width:140.5px;height:13.85px"><span class="t" style="top:0.64px;transform:scaleX(1.086)">Product Name</span></div>
<div class="c " style="left:-39.5px;top:222.25px;width:75.7px;height:13.69px"><span class="t r" style="top:0.34px;transform:scaleX(0.957)">11<span style="padding:0 1.25px">/</span>11<span style="padding:0 1.25px">/</span>2016</span></div>
<div class="c " style="left:37.2px;top:222.25px;width:72.9px;height:13.69px"><span class="t" style="top:0.34px;transform:scaleX(1.050)">Second Class</span></div>
<div class="c " style="left:111.1px;top:222.25px;width:62.9px;height:13.69px"><span class="t" style="top:0.34px;transform:scaleX(0.976)">CG-12520</span></div>
<div class="c " style="left:175.0px;top:222.25px;width:120.9px;height:13.69px"><span class="t" style="top:0.34px;transform:scaleX(1.062)">Claire Gute</span></div>
<div class="c " style="left:296.9px;top:222.25px;width:62.6px;height:13.69px"><span class="t" style="top:0.34px;transform:scaleX(1.082)">Consumer</span></div>
<div class="c " style="left:360.5px;top:222.25px;width:65.4px;height:13.69px"><span class="t" style="top:0.34px;transform:scaleX(1.072)">United States</span></div>
<div class="c " style="left:426.9px;top:222.25px;width:97.1px;height:13.69px"><span class="t" style="top:0.34px;transform:scaleX(1.096)">Henderson</span></div>
<div class="c " style="left:525.0px;top:222.25px;width:99.0px;height:13.69px"><span class="t" style="top:0.34px;transform:scaleX(1.056)">Kentucky</span></div>
<div class="c " style="left:625.0px;top:222.25px;width:60.0px;height:13.69px"><span class="t r" style="top:0.34px;transform:scaleX(0.957)">42420</span></div>
<div class="c " style="left:686.0px;top:222.25px;width:37.0px;height:13.69px"><span class="t" style="top:0.34px;transform:scaleX(1.065)">South</span></div>
<div class="c " style="left:724.0px;top:222.25px;width:90.0px;height:13.69px"><span class="t" style="top:0.34px;transform:scaleX(0.965)">FUR-BO-10001798</span></div>
<div class="c " style="left:815.0px;top:222.25px;width:75.1px;height:13.69px"><span class="t" style="top:0.34px;transform:scaleX(1.092)">Furniture</span></div>
<div class="c " style="left:891.1px;top:222.25px;width:66.9px;height:13.69px"><span class="t" style="top:0.34px;transform:scaleX(1.029)">Bookcases</span></div>
<div class="c " style="left:959.0px;top:222.25px;width:140.5px;height:13.69px"><span class="t" style="top:0.34px;transform:scaleX(1.040)">Bush Somerset Collection Bookcase</span></div>
<div class="c " style="left:-39.5px;top:235.94px;width:75.7px;height:13.69px"><span class="t r" style="top:0.34px;transform:scaleX(0.957)">11<span style="padding:0 1.25px">/</span>11<span style="padding:0 1.25px">/</span>2016</span></div>
<div class="c " style="left:37.2px;top:235.94px;width:72.9px;height:13.69px"><span class="t" style="top:0.34px;transform:scaleX(1.050)">Second Class</span></div>
<div class="c " style="left:111.1px;top:235.94px;width:62.9px;height:13.69px"><span class="t" style="top:0.34px;transform:scaleX(0.976)">CG-12520</span></div>
<div class="c " style="left:175.0px;top:235.94px;width:120.9px;height:13.69px"><span class="t" style="top:0.34px;transform:scaleX(1.062)">Claire Gute</span></div>
<div class="c " style="left:296.9px;top:235.94px;width:62.6px;height:13.69px"><span class="t" style="top:0.34px;transform:scaleX(1.082)">Consumer</span></div>
<div class="c " style="left:360.5px;top:235.94px;width:65.4px;height:13.69px"><span class="t" style="top:0.34px;transform:scaleX(1.072)">United States</span></div>
<div class="c " style="left:426.9px;top:235.94px;width:97.1px;height:13.69px"><span class="t" style="top:0.34px;transform:scaleX(1.096)">Henderson</span></div>
<div class="c " style="left:525.0px;top:235.94px;width:99.0px;height:13.69px"><span class="t" style="top:0.34px;transform:scaleX(1.056)">Kentucky</span></div>
<div class="c " style="left:625.0px;top:235.94px;width:60.0px;height:13.69px"><span class="t r" style="top:0.34px;transform:scaleX(0.957)">42420</span></div>
<div class="c " style="left:686.0px;top:235.94px;width:37.0px;height:13.69px"><span class="t" style="top:0.34px;transform:scaleX(1.065)">South</span></div>
<div class="c " style="left:724.0px;top:235.94px;width:90.0px;height:13.69px"><span class="t" style="top:0.34px;transform:scaleX(0.983)">FUR-CH-10000454</span></div>
<div class="c " style="left:815.0px;top:235.94px;width:75.1px;height:13.69px"><span class="t" style="top:0.34px;transform:scaleX(1.092)">Furniture</span></div>
<div class="c " style="left:891.1px;top:235.94px;width:66.9px;height:13.69px"><span class="t" style="top:0.34px;transform:scaleX(1.079)">Chairs</span></div>
<div class="c " style="left:959.0px;top:235.94px;width:140.5px;height:13.69px"><span class="t" style="top:0.34px;transform:scaleX(1.062)">Hon Deluxe Fabric Upholstered Stacking Chairs</span></div>
<div class="c " style="left:-39.5px;top:249.63px;width:75.7px;height:13.69px"><span class="t r" style="top:0.34px;transform:scaleX(0.957)">16<span style="padding:0 1.25px">/</span>06<span style="padding:0 1.25px">/</span>2016</span></div>
<div class="c " style="left:37.2px;top:249.63px;width:72.9px;height:13.69px"><span class="t" style="top:0.34px;transform:scaleX(1.050)">Second Class</span></div>
<div class="c " style="left:111.1px;top:249.63px;width:62.9px;height:13.69px"><span class="t" style="top:0.34px;transform:scaleX(0.990)">DV-13045</span></div>
<div class="c " style="left:175.0px;top:249.63px;width:120.9px;height:13.69px"><span class="t" style="top:0.34px;transform:scaleX(1.089)">Darrin Van Huff</span></div>
<div class="c " style="left:296.9px;top:249.63px;width:62.6px;height:13.69px"><span class="t" style="top:0.34px;transform:scaleX(1.084)">Corporate</span></div>
<div class="c " style="left:360.5px;top:249.63px;width:65.4px;height:13.69px"><span class="t" style="top:0.34px;transform:scaleX(1.072)">United States</span></div>
<div class="c " style="left:426.9px;top:249.63px;width:97.1px;height:13.69px"><span class="t" style="top:0.34px;transform:scaleX(1.060)">Los Angeles</span></div>
<div class="c " style="left:525.0px;top:249.63px;width:99.0px;height:13.69px"><span class="t" style="top:0.34px;transform:scaleX(1.058)">California</span></div>
<div class="c " style="left:625.0px;top:249.63px;width:60.0px;height:13.69px"><span class="t r" style="top:0.34px;transform:scaleX(0.957)">90036</span></div>
<div class="c " style="left:686.0px;top:249.63px;width:37.0px;height:13.69px"><span class="t" style="top:0.34px;transform:scaleX(1.100)">West</span></div>
<div class="c " style="left:724.0px;top:249.63px;width:90.0px;height:13.69px"><span class="t" style="top:0.34px;transform:scaleX(0.972)">OFF-LA-10000240</span></div>
<div class="c " style="left:815.0px;top:249.63px;width:75.1px;height:13.69px"><span class="t" style="top:0.34px;transform:scaleX(1.043)">Office Supplies</span></div>
<div class="c " style="left:891.1px;top:249.63px;width:66.9px;height:13.69px"><span class="t" style="top:0.34px;transform:scaleX(1.045)">Labels</span></div>
<div class="c " style="left:959.0px;top:249.63px;width:140.5px;height:13.69px"><span class="t" style="top:0.34px;transform:scaleX(1.069)">Self-Adhesive Address Labels for Typewriters</span></div>
<div class="c " style="left:-39.5px;top:263.32px;width:75.7px;height:13.69px"><span class="t r" style="top:0.34px;transform:scaleX(0.957)">18<span style="padding:0 1.25px">/</span>10<span style="padding:0 1.25px">/</span>2015</span></div>
<div class="c " style="left:37.2px;top:263.32px;width:72.9px;height:13.69px"><span class="t" style="top:0.34px;transform:scaleX(1.089)">Standard Class</span></div>
<div class="c " style="left:111.1px;top:263.32px;width:62.9px;height:13.69px"><span class="t" style="top:0.34px;transform:scaleX(0.965)">SO-20335</span></div>
<div class="c " style="left:175.0px;top:263.32px;width:120.9px;height:13.69px"><span class="t" style="top:0.34px;transform:scaleX(1.061)">Sean O'Donnell</span></div>
<div class="c " style="left:296.9px;top:263.32px;width:62.6px;height:13.69px"><span class="t" style="top:0.34px;transform:scaleX(1.082)">Consumer</span></div>
<div class="c " style="left:360.5px;top:263.32px;width:65.4px;height:13.69px"><span class="t" style="top:0.34px;transform:scaleX(1.072)">United States</span></div>
<div class="c " style="left:426.9px;top:263.32px;width:97.1px;height:13.69px"><span class="t" style="top:0.34px;transform:scaleX(1.079)">Fort Lauderdale</span></div>
<div class="c " style="left:525.0px;top:263.32px;width:99.0px;height:13.69px"><span class="t" style="top:0.34px;transform:scaleX(1.065)">Florida</span></div>
<div class="c " style="left:625.0px;top:263.32px;width:60.0px;height:13.69px"><span class="t r" style="top:0.34px;transform:scaleX(0.972)">33311</span></div>
<div class="c " style="left:686.0px;top:263.32px;width:37.0px;height:13.69px"><span class="t" style="top:0.34px;transform:scaleX(1.065)">South</span></div>
<div class="c " style="left:724.0px;top:263.32px;width:90.0px;height:13.69px"><span class="t" style="top:0.34px;transform:scaleX(0.981)">FUR-TA-10000577</span></div>
<div class="c " style="left:815.0px;top:263.32px;width:75.1px;height:13.69px"><span class="t" style="top:0.34px;transform:scaleX(1.092)">Furniture</span></div>
<div class="c " style="left:891.1px;top:263.32px;width:66.9px;height:13.69px"><span class="t" style="top:0.34px;transform:scaleX(1.074)">Tables</span></div>
<div class="c " style="left:959.0px;top:263.32px;width:140.5px;height:13.69px"><span class="t" style="top:0.34px;transform:scaleX(1.036)">Bretford CR4500 Series Slim Rectangular Table</span></div>
<div class="c " style="left:-39.5px;top:277.01px;width:75.7px;height:13.69px"><span class="t r" style="top:0.34px;transform:scaleX(0.957)">18<span style="padding:0 1.25px">/</span>10<span style="padding:0 1.25px">/</span>2015</span></div>
<div class="c " style="left:37.2px;top:277.01px;width:72.9px;height:13.69px"><span class="t" style="top:0.34px;transform:scaleX(1.089)">Standard Class</span></div>
<div class="c " style="left:111.1px;top:277.01px;width:62.9px;height:13.69px"><span class="t" style="top:0.34px;transform:scaleX(0.965)">SO-20335</span></div>
<div class="c " style="left:175.0px;top:277.01px;width:120.9px;height:13.69px"><span class="t" style="top:0.34px;transform:scaleX(1.061)">Sean O'Donnell</span></div>
<div class="c " style="left:296.9px;top:277.01px;width:62.6px;height:13.69px"><span class="t" style="top:0.34px;transform:scaleX(1.082)">Consumer</span></div>
<div class="c " style="left:360.5px;top:277.01px;width:65.4px;height:13.69px"><span class="t" style="top:0.34px;transform:scaleX(1.072)">United States</span></div>
<div class="c " style="left:426.9px;top:277.01px;width:97.1px;height:13.69px"><span class="t" style="top:0.34px;transform:scaleX(1.079)">Fort Lauderdale</span></div>
<div class="c " style="left:525.0px;top:277.01px;width:99.0px;height:13.69px"><span class="t" style="top:0.34px;transform:scaleX(1.065)">Florida</span></div>
<div class="c " style="left:625.0px;top:277.01px;width:60.0px;height:13.69px"><span class="t r" style="top:0.34px;transform:scaleX(0.972)">33311</span></div>
<div class="c " style="left:686.0px;top:277.01px;width:37.0px;height:13.69px"><span class="t" style="top:0.34px;transform:scaleX(1.065)">South</span></div>
<div class="c " style="left:724.0px;top:277.01px;width:90.0px;height:13.69px"><span class="t" style="top:0.34px;transform:scaleX(0.974)">OFF-ST-10000760</span></div>
<div class="c " style="left:815.0px;top:277.01px;width:75.1px;height:13.69px"><span class="t" style="top:0.34px;transform:scaleX(1.043)">Office Supplies</span></div>
<div class="c " style="left:891.1px;top:277.01px;width:66.9px;height:13.69px"><span class="t" style="top:0.34px;transform:scaleX(1.052)">Storage</span></div>
<div class="c " style="left:959.0px;top:277.01px;width:140.5px;height:13.69px"><span class="t" style="top:0.34px;transform:scaleX(1.060)">Eldon Fold 'N Roll Cart System</span></div>
<div class="c " style="left:-39.5px;top:290.69px;width:75.7px;height:13.69px"><span class="t r" style="top:0.34px;transform:scaleX(0.957)">14<span style="padding:0 1.25px">/</span>06<span style="padding:0 1.25px">/</span>2014</span></div>
<div class="c " style="left:37.2px;top:290.69px;width:72.9px;height:13.69px"><span class="t" style="top:0.34px;transform:scaleX(1.089)">Standard Class</span></div>
<div class="c " style="left:111.1px;top:290.69px;width:62.9px;height:13.69px"><span class="t" style="top:0.34px;transform:scaleX(0.979)">BH-11710</span></div>
<div class="c " style="left:175.0px;top:290.69px;width:120.9px;height:13.69px"><span class="t" style="top:0.34px;transform:scaleX(1.058)">Brosina Hoffman</span></div>
<div class="c " style="left:296.9px;top:290.69px;width:62.6px;height:13.69px"><span class="t" style="top:0.34px;transform:scaleX(1.082)">Consumer</span></div>
<div class="c " style="left:360.5px;top:290.69px;width:65.4px;height:13.69px"><span class="t" style="top:0.34px;transform:scaleX(1.072)">United States</span></div>
<div class="c " style="left:426.9px;top:290.69px;width:97.1px;height:13.69px"><span class="t" style="top:0.34px;transform:scaleX(1.060)">Los Angeles</span></div>
<div class="c " style="left:525.0px;top:290.69px;width:99.0px;height:13.69px"><span class="t" style="top:0.34px;transform:scaleX(1.058)">California</span></div>
<div class="c " style="left:625.0px;top:290.69px;width:60.0px;height:13.69px"><span class="t r" style="top:0.34px;transform:scaleX(0.957)">90032</span></div>
<div class="c " style="left:686.0px;top:290.69px;width:37.0px;height:13.69px"><span class="t" style="top:0.34px;transform:scaleX(1.100)">West</span></div>
<div class="c " style="left:724.0px;top:290.69px;width:90.0px;height:13.69px"><span class="t" style="top:0.34px;transform:scaleX(0.971)">FUR-FU-10001487</span></div>
<div class="c " style="left:815.0px;top:290.69px;width:75.1px;height:13.69px"><span class="t" style="top:0.34px;transform:scaleX(1.092)">Furniture</span></div>
<div class="c " style="left:891.1px;top:290.69px;width:66.9px;height:13.69px"><span class="t" style="top:0.34px;transform:scaleX(1.082)">Furnishings</span></div>
<div class="c " style="left:959.0px;top:290.69px;width:140.5px;height:13.69px"><span class="t" style="top:0.34px;transform:scaleX(1.071)">Eldon Expressions Wood and Plastic Desk</span></div>
<div class="c " style="left:-39.5px;top:304.38px;width:75.7px;height:13.69px"><span class="t r" style="top:0.34px;transform:scaleX(0.957)">14<span style="padding:0 1.25px">/</span>06<span style="padding:0 1.25px">/</span>2014</span></div>
<div class="c " style="left:37.2px;top:304.38px;width:72.9px;height:13.69px"><span class="t" style="top:0.34px;transform:scaleX(1.089)">Standard Class</span></div>
<div class="c " style="left:111.1px;top:304.38px;width:62.9px;height:13.69px"><span class="t" style="top:0.34px;transform:scaleX(0.979)">BH-11710</span></div>
<div class="c " style="left:175.0px;top:304.38px;width:120.9px;height:13.69px"><span class="t" style="top:0.34px;transform:scaleX(1.058)">Brosina Hoffman</span></div>
<div class="c " style="left:296.9px;top:304.38px;width:62.6px;height:13.69px"><span class="t" style="top:0.34px;transform:scaleX(1.082)">Consumer</span></div>
<div class="c " style="left:360.5px;top:304.38px;width:65.4px;height:13.69px"><span class="t" style="top:0.34px;transform:scaleX(1.072)">United States</span></div>
<div class="c " style="left:426.9px;top:304.38px;width:97.1px;height:13.69px"><span class="t" style="top:0.34px;transform:scaleX(1.060)">Los Angeles</span></div>
<div class="c " style="left:525.0px;top:304.38px;width:99.0px;height:13.69px"><span class="t" style="top:0.34px;transform:scaleX(1.058)">California</span></div>
<div class="c " style="left:625.0px;top:304.38px;width:60.0px;height:13.69px"><span class="t r" style="top:0.34px;transform:scaleX(0.957)">90032</span></div>
<div class="c " style="left:686.0px;top:304.38px;width:37.0px;height:13.69px"><span class="t" style="top:0.34px;transform:scaleX(1.100)">West</span></div>
<div class="c " style="left:724.0px;top:304.38px;width:90.0px;height:13.69px"><span class="t" style="top:0.34px;transform:scaleX(0.972)">OFF-AR-10002833</span></div>
<div class="c " style="left:815.0px;top:304.38px;width:75.1px;height:13.69px"><span class="t" style="top:0.34px;transform:scaleX(1.043)">Office Supplies</span></div>
<div class="c " style="left:891.1px;top:304.38px;width:66.9px;height:13.69px"><span class="t" style="top:0.34px;transform:scaleX(1.086)">Art</span></div>
<div class="c " style="left:959.0px;top:304.38px;width:140.5px;height:13.69px"><span class="t" style="top:0.34px;transform:scaleX(1.031)">Newell 322</span></div>
<div class="c " style="left:-39.5px;top:318.07px;width:75.7px;height:13.69px"><span class="t r" style="top:0.34px;transform:scaleX(0.957)">14<span style="padding:0 1.25px">/</span>06<span style="padding:0 1.25px">/</span>2014</span></div>
<div class="c " style="left:37.2px;top:318.07px;width:72.9px;height:13.69px"><span class="t" style="top:0.34px;transform:scaleX(1.089)">Standard Class</span></div>
<div class="c " style="left:111.1px;top:318.07px;width:62.9px;height:13.69px"><span class="t" style="top:0.34px;transform:scaleX(0.979)">BH-11710</span></div>
<div class="c " style="left:175.0px;top:318.07px;width:120.9px;height:13.69px"><span class="t" style="top:0.34px;transform:scaleX(1.058)">Brosina Hoffman</span></div>
<div class="c " style="left:296.9px;top:318.07px;width:62.6px;height:13.69px"><span class="t" style="top:0.34px;transform:scaleX(1.082)">Consumer</span></div>
<div class="c " style="left:360.5px;top:318.07px;width:65.4px;height:13.69px"><span class="t" style="top:0.34px;transform:scaleX(1.072)">United States</span></div>
<div class="c " style="left:426.9px;top:318.07px;width:97.1px;height:13.69px"><span class="t" style="top:0.34px;transform:scaleX(1.060)">Los Angeles</span></div>
<div class="c " style="left:525.0px;top:318.07px;width:99.0px;height:13.69px"><span class="t" style="top:0.34px;transform:scaleX(1.058)">California</span></div>
<div class="c " style="left:625.0px;top:318.07px;width:60.0px;height:13.69px"><span class="t r" style="top:0.34px;transform:scaleX(0.957)">90032</span></div>
<div class="c " style="left:686.0px;top:318.07px;width:37.0px;height:13.69px"><span class="t" style="top:0.34px;transform:scaleX(1.100)">West</span></div>
<div class="c " style="left:724.0px;top:318.07px;width:90.0px;height:13.69px"><span class="t" style="top:0.34px;transform:scaleX(0.982)">TEC-PH-10002275</span></div>
<div class="c " style="left:815.0px;top:318.07px;width:75.1px;height:13.69px"><span class="t" style="top:0.34px;transform:scaleX(1.059)">Technology</span></div>
<div class="c " style="left:891.1px;top:318.07px;width:66.9px;height:13.69px"><span class="t" style="top:0.34px;transform:scaleX(1.075)">Phones</span></div>
<div class="c " style="left:959.0px;top:318.07px;width:140.5px;height:13.69px"><span class="t" style="top:0.34px;transform:scaleX(1.052)">Mitel 5320 IP Phone VoIP phone</span></div>
<div class="c " style="left:-39.5px;top:331.76px;width:75.7px;height:13.69px"><span class="t r" style="top:0.34px;transform:scaleX(0.957)">14<span style="padding:0 1.25px">/</span>06<span style="padding:0 1.25px">/</span>2014</span></div>
<div class="c " style="left:37.2px;top:331.76px;width:72.9px;height:13.69px"><span class="t" style="top:0.34px;transform:scaleX(1.089)">Standard Class</span></div>
<div class="c " style="left:111.1px;top:331.76px;width:62.9px;height:13.69px"><span class="t" style="top:0.34px;transform:scaleX(0.979)">BH-11710</span></div>
<div class="c " style="left:175.0px;top:331.76px;width:120.9px;height:13.69px"><span class="t" style="top:0.34px;transform:scaleX(1.058)">Brosina Hoffman</span></div>
<div class="c " style="left:296.9px;top:331.76px;width:62.6px;height:13.69px"><span class="t" style="top:0.34px;transform:scaleX(1.082)">Consumer</span></div>
<div class="c " style="left:360.5px;top:331.76px;width:65.4px;height:13.69px"><span class="t" style="top:0.34px;transform:scaleX(1.072)">United States</span></div>
<div class="c " style="left:426.9px;top:331.76px;width:97.1px;height:13.69px"><span class="t" style="top:0.34px;transform:scaleX(1.060)">Los Angeles</span></div>
<div class="c " style="left:525.0px;top:331.76px;width:99.0px;height:13.69px"><span class="t" style="top:0.34px;transform:scaleX(1.058)">California</span></div>
<div class="c " style="left:625.0px;top:331.76px;width:60.0px;height:13.69px"><span class="t r" style="top:0.34px;transform:scaleX(0.957)">90032</span></div>
<div class="c " style="left:686.0px;top:331.76px;width:37.0px;height:13.69px"><span class="t" style="top:0.34px;transform:scaleX(1.100)">West</span></div>
<div class="c " style="left:724.0px;top:331.76px;width:90.0px;height:13.69px"><span class="t" style="top:0.34px;transform:scaleX(0.959)">OFF-BI-10003910</span></div>
<div class="c " style="left:815.0px;top:331.76px;width:75.1px;height:13.69px"><span class="t" style="top:0.34px;transform:scaleX(1.043)">Office Supplies</span></div>
<div class="c " style="left:891.1px;top:331.76px;width:66.9px;height:13.69px"><span class="t" style="top:0.34px;transform:scaleX(1.052)">Binders</span></div>
<div class="c " style="left:959.0px;top:331.76px;width:140.5px;height:13.69px"><span class="t" style="top:0.34px;transform:scaleX(1.045)">DXL Angle-View Binders with Locking Rings</span></div>
<div class="c " style="left:-39.5px;top:345.45px;width:75.7px;height:13.69px"><span class="t r" style="top:0.34px;transform:scaleX(0.957)">14<span style="padding:0 1.25px">/</span>06<span style="padding:0 1.25px">/</span>2014</span></div>
<div class="c " style="left:37.2px;top:345.45px;width:72.9px;height:13.69px"><span class="t" style="top:0.34px;transform:scaleX(1.089)">Standard Class</span></div>
<div class="c " style="left:111.1px;top:345.45px;width:62.9px;height:13.69px"><span class="t" style="top:0.34px;transform:scaleX(0.979)">BH-11710</span></div>
<div class="c " style="left:175.0px;top:345.45px;width:120.9px;height:13.69px"><span class="t" style="top:0.34px;transform:scaleX(1.058)">Brosina Hoffman</span></div>
<div class="c " style="left:296.9px;top:345.45px;width:62.6px;height:13.69px"><span class="t" style="top:0.34px;transform:scaleX(1.082)">Consumer</span></div>
<div class="c " style="left:360.5px;top:345.45px;width:65.4px;height:13.69px"><span class="t" style="top:0.34px;transform:scaleX(1.072)">United States</span></div>
<div class="c " style="left:426.9px;top:345.45px;width:97.1px;height:13.69px"><span class="t" style="top:0.34px;transform:scaleX(1.060)">Los Angeles</span></div>
<div class="c " style="left:525.0px;top:345.45px;width:99.0px;height:13.69px"><span class="t" style="top:0.34px;transform:scaleX(1.058)">California</span></div>
<div class="c " style="left:625.0px;top:345.45px;width:60.0px;height:13.69px"><span class="t r" style="top:0.34px;transform:scaleX(0.957)">90032</span></div>
<div class="c " style="left:686.0px;top:345.45px;width:37.0px;height:13.69px"><span class="t" style="top:0.34px;transform:scaleX(1.100)">West</span></div>
<div class="c " style="left:724.0px;top:345.45px;width:90.0px;height:13.69px"><span class="t" style="top:0.34px;transform:scaleX(0.978)">OFF-AP-10002892</span></div>
<div class="c " style="left:815.0px;top:345.45px;width:75.1px;height:13.69px"><span class="t" style="top:0.34px;transform:scaleX(1.043)">Office Supplies</span></div>
<div class="c " style="left:891.1px;top:345.45px;width:66.9px;height:13.69px"><span class="t" style="top:0.34px;transform:scaleX(1.073)">Appliances</span></div>
<div class="c " style="left:959.0px;top:345.45px;width:140.5px;height:13.69px"><span class="t" style="top:0.34px;transform:scaleX(1.017)">Belkin F5C206VTEL 6 Outlet Surge</span></div>
<div class="c " style="left:-39.5px;top:359.14px;width:75.7px;height:13.69px"><span class="t r" style="top:0.34px;transform:scaleX(0.957)">14<span style="padding:0 1.25px">/</span>06<span style="padding:0 1.25px">/</span>2014</span></div>
<div class="c " style="left:37.2px;top:359.14px;width:72.9px;height:13.69px"><span class="t" style="top:0.34px;transform:scaleX(1.089)">Standard Class</span></div>
<div class="c " style="left:111.1px;top:359.14px;width:62.9px;height:13.69px"><span class="t" style="top:0.34px;transform:scaleX(0.979)">BH-11710</span></div>
<div class="c " style="left:175.0px;top:359.14px;width:120.9px;height:13.69px"><span class="t" style="top:0.34px;transform:scaleX(1.058)">Brosina Hoffman</span></div>
<div class="c " style="left:296.9px;top:359.14px;width:62.6px;height:13.69px"><span class="t" style="top:0.34px;transform:scaleX(1.082)">Consumer</span></div>
<div class="c " style="left:360.5px;top:359.14px;width:65.4px;height:13.69px"><span class="t" style="top:0.34px;transform:scaleX(1.072)">United States</span></div>
<div class="c " style="left:426.9px;top:359.14px;width:97.1px;height:13.69px"><span class="t" style="top:0.34px;transform:scaleX(1.060)">Los Angeles</span></div>
<div class="c " style="left:525.0px;top:359.14px;width:99.0px;height:13.69px"><span class="t" style="top:0.34px;transform:scaleX(1.058)">California</span></div>
<div class="c " style="left:625.0px;top:359.14px;width:60.0px;height:13.69px"><span class="t r" style="top:0.34px;transform:scaleX(0.957)">90032</span></div>
<div class="c " style="left:686.0px;top:359.14px;width:37.0px;height:13.69px"><span class="t" style="top:0.34px;transform:scaleX(1.100)">West</span></div>
<div class="c " style="left:724.0px;top:359.14px;width:90.0px;height:13.69px"><span class="t" style="top:0.34px;transform:scaleX(0.981)">FUR-TA-10001539</span></div>
<div class="c " style="left:815.0px;top:359.14px;width:75.1px;height:13.69px"><span class="t" style="top:0.34px;transform:scaleX(1.092)">Furniture</span></div>
<div class="c " style="left:891.1px;top:359.14px;width:66.9px;height:13.69px"><span class="t" style="top:0.34px;transform:scaleX(1.074)">Tables</span></div>
<div class="c " style="left:959.0px;top:359.14px;width:140.5px;height:13.69px"><span class="t" style="top:0.34px;transform:scaleX(1.063)">Chromcraft Rectangular Conference Tables</span></div>
<div class="c " style="left:-39.5px;top:372.83px;width:75.7px;height:13.69px"><span class="t r" style="top:0.34px;transform:scaleX(0.957)">14<span style="padding:0 1.25px">/</span>06<span style="padding:0 1.25px">/</span>2014</span></div>
<div class="c " style="left:37.2px;top:372.83px;width:72.9px;height:13.69px"><span class="t" style="top:0.34px;transform:scaleX(1.089)">Standard Class</span></div>
<div class="c " style="left:111.1px;top:372.83px;width:62.9px;height:13.69px"><span class="t" style="top:0.34px;transform:scaleX(0.979)">BH-11710</span></div>
<div class="c " style="left:175.0px;top:372.83px;width:120.9px;height:13.69px"><span class="t" style="top:0.34px;transform:scaleX(1.058)">Brosina Hoffman</span></div>
<div class="c " style="left:296.9px;top:372.83px;width:62.6px;height:13.69px"><span class="t" style="top:0.34px;transform:scaleX(1.082)">Consumer</span></div>
<div class="c " style="left:360.5px;top:372.83px;width:65.4px;height:13.69px"><span class="t" style="top:0.34px;transform:scaleX(1.072)">United States</span></div>
<div class="c " style="left:426.9px;top:372.83px;width:97.1px;height:13.69px"><span class="t" style="top:0.34px;transform:scaleX(1.060)">Los Angeles</span></div>
<div class="c " style="left:525.0px;top:372.83px;width:99.0px;height:13.69px"><span class="t" style="top:0.34px;transform:scaleX(1.058)">California</span></div>
<div class="c " style="left:625.0px;top:372.83px;width:60.0px;height:13.69px"><span class="t r" style="top:0.34px;transform:scaleX(0.957)">90032</span></div>
<div class="c " style="left:686.0px;top:372.83px;width:37.0px;height:13.69px"><span class="t" style="top:0.34px;transform:scaleX(1.100)">West</span></div>
<div class="c " style="left:724.0px;top:372.83px;width:90.0px;height:13.69px"><span class="t" style="top:0.34px;transform:scaleX(0.982)">TEC-PH-10002033</span></div>
<div class="c " style="left:815.0px;top:372.83px;width:75.1px;height:13.69px"><span class="t" style="top:0.34px;transform:scaleX(1.059)">Technology</span></div>
<div class="c " style="left:891.1px;top:372.83px;width:66.9px;height:13.69px"><span class="t" style="top:0.34px;transform:scaleX(1.075)">Phones</span></div>
<div class="c " style="left:959.0px;top:372.83px;width:140.5px;height:13.69px"><span class="t" style="top:0.34px;transform:scaleX(1.041)">Konftel 250 Conference phone</span></div>
<div class="c " style="left:-39.5px;top:386.52px;width:75.7px;height:13.69px"><span class="t r" style="top:0.34px;transform:scaleX(0.957)">20<span style="padding:0 1.25px">/</span>04<span style="padding:0 1.25px">/</span>2017</span></div>
<div class="c " style="left:37.2px;top:386.52px;width:72.9px;height:13.69px"><span class="t" style="top:0.34px;transform:scaleX(1.089)">Standard Class</span></div>
<div class="c " style="left:111.1px;top:386.52px;width:62.9px;height:13.69px"><span class="t" style="top:0.34px;transform:scaleX(0.983)">AA-10480</span></div>
<div class="c " style="left:175.0px;top:386.52px;width:120.9px;height:13.69px"><span class="t" style="top:0.34px;transform:scaleX(1.085)">Andrew Allen</span></div>
<div class="c " style="left:296.9px;top:386.52px;width:62.6px;height:13.69px"><span class="t" style="top:0.34px;transform:scaleX(1.082)">Consumer</span></div>
<div class="c " style="left:360.5px;top:386.52px;width:65.4px;height:13.69px"><span class="t" style="top:0.34px;transform:scaleX(1.072)">United States</span></div>
<div class="c " style="left:426.9px;top:386.52px;width:97.1px;height:13.69px"><span class="t" style="top:0.34px;transform:scaleX(1.066)">Concord</span></div>
<div class="c " style="left:525.0px;top:386.52px;width:99.0px;height:13.69px"><span class="t" style="top:0.34px;transform:scaleX(1.083)">North Carolina</span></div>
<div class="c " style="left:625.0px;top:386.52px;width:60.0px;height:13.69px"><span class="t r" style="top:0.34px;transform:scaleX(0.957)">28027</span></div>
<div class="c " style="left:686.0px;top:386.52px;width:37.0px;height:13.69px"><span class="t" style="top:0.34px;transform:scaleX(1.065)">South</span></div>
<div class="c " style="left:724.0px;top:386.52px;width:90.0px;height:13.69px"><span class="t" style="top:0.34px;transform:scaleX(0.990)">OFF-PA-10002365</span></div>
<div class="c " style="left:815.0px;top:386.52px;width:75.1px;height:13.69px"><span class="t" style="top:0.34px;transform:scaleX(1.043)">Office Supplies</span></div>
<div class="c " style="left:891.1px;top:386.52px;width:66.9px;height:13.69px"><span class="t" style="top:0.34px;transform:scaleX(1.091)">Paper</span></div>
<div class="c " style="left:959.0px;top:386.52px;width:140.5px;height:13.69px"><span class="t" style="top:0.34px;transform:scaleX(0.982)">Xerox 1967</span></div>
<div class="c " style="left:-39.5px;top:400.21px;width:75.7px;height:13.69px"><span class="t r" style="top:0.34px;transform:scaleX(0.957)">10<span style="padding:0 1.25px">/</span>12<span style="padding:0 1.25px">/</span>2016</span></div>
<div class="c " style="left:37.2px;top:400.21px;width:72.9px;height:13.69px"><span class="t" style="top:0.34px;transform:scaleX(1.089)">Standard Class</span></div>
<div class="c " style="left:111.1px;top:400.21px;width:62.9px;height:13.69px"><span class="t" style="top:0.34px;transform:scaleX(0.972)">IM-15070</span></div>
<div class="c " style="left:175.0px;top:400.21px;width:120.9px;height:13.69px"><span class="t" style="top:0.34px;transform:scaleX(1.068)">Irene Maddox</span></div>
<div class="c " style="left:296.9px;top:400.21px;width:62.6px;height:13.69px"><span class="t" style="top:0.34px;transform:scaleX(1.082)">Consumer</span></div>
<div class="c " style="left:360.5px;top:400.21px;width:65.4px;height:13.69px"><span class="t" style="top:0.34px;transform:scaleX(1.072)">United States</span></div>
<div class="c " style="left:426.9px;top:400.21px;width:97.1px;height:13.69px"><span class="t" style="top:0.34px;transform:scaleX(1.048)">Seattle</span></div>
<div class="c " style="left:525.0px;top:400.21px;width:99.0px;height:13.69px"><span class="t" style="top:0.34px;transform:scaleX(1.097)">Washington</span></div>
<div class="c " style="left:625.0px;top:400.21px;width:60.0px;height:13.69px"><span class="t r" style="top:0.34px;transform:scaleX(0.957)">98103</span></div>
<div class="c " style="left:686.0px;top:400.21px;width:37.0px;height:13.69px"><span class="t" style="top:0.34px;transform:scaleX(1.100)">West</span></div>
<div class="c " style="left:724.0px;top:400.21px;width:90.0px;height:13.69px"><span class="t" style="top:0.34px;transform:scaleX(0.959)">OFF-BI-10003656</span></div>
<div class="c " style="left:815.0px;top:400.21px;width:75.1px;height:13.69px"><span class="t" style="top:0.34px;transform:scaleX(1.043)">Office Supplies</span></div>
<div class="c " style="left:891.1px;top:400.21px;width:66.9px;height:13.69px"><span class="t" style="top:0.34px;transform:scaleX(1.052)">Binders</span></div>
<div class="c " style="left:959.0px;top:400.21px;width:140.5px;height:13.69px"><span class="t" style="top:0.34px;transform:scaleX(1.036)">Fellowes PB200 Plastic Comb Binding Machine</span></div>
<div class="c " style="left:-39.5px;top:413.90px;width:75.7px;height:13.69px"><span class="t r" style="top:0.34px;transform:scaleX(0.957)">26<span style="padding:0 1.25px">/</span>11<span style="padding:0 1.25px">/</span>2015</span></div>
<div class="c " style="left:37.2px;top:413.90px;width:72.9px;height:13.69px"><span class="t" style="top:0.34px;transform:scaleX(1.089)">Standard Class</span></div>
<div class="c " style="left:111.1px;top:413.90px;width:62.9px;height:13.69px"><span class="t" style="top:0.34px;transform:scaleX(0.994)">HP-14815</span></div>
<div class="c " style="left:175.0px;top:413.90px;width:120.9px;height:13.69px"><span class="t" style="top:0.34px;transform:scaleX(1.094)">Harold Pawlan</span></div>
<div class="c " style="left:296.9px;top:413.90px;width:62.6px;height:13.69px"><span class="t" style="top:0.34px;transform:scaleX(1.039)">Home Office</span></div>
<div class="c " style="left:360.5px;top:413.90px;width:65.4px;height:13.69px"><span class="t" style="top:0.34px;transform:scaleX(1.072)">United States</span></div>
<div class="c " style="left:426.9px;top:413.90px;width:97.1px;height:13.69px"><span class="t" style="top:0.34px;transform:scaleX(1.088)">Fort Worth</span></div>
<div class="c " style="left:525.0px;top:413.90px;width:99.0px;height:13.69px"><span class="t" style="top:0.34px;transform:scaleX(1.063)">Texas</span></div>
<div class="c " style="left:625.0px;top:413.90px;width:60.0px;height:13.69px"><span class="t r" style="top:0.34px;transform:scaleX(0.957)">76106</span></div>
<div class="c " style="left:686.0px;top:413.90px;width:37.0px;height:13.69px"><span class="t" style="top:0.34px;transform:scaleX(1.080)">Central</span></div>
<div class="c " style="left:724.0px;top:413.90px;width:90.0px;height:13.69px"><span class="t" style="top:0.34px;transform:scaleX(0.983)">OFF-AP-10002311</span></div>
<div class="c " style="left:815.0px;top:413.90px;width:75.1px;height:13.69px"><span class="t" style="top:0.34px;transform:scaleX(1.043)">Office Supplies</span></div>
<div class="c " style="left:891.1px;top:413.90px;width:66.9px;height:13.69px"><span class="t" style="top:0.34px;transform:scaleX(1.073)">Appliances</span></div>
<div class="c " style="left:959.0px;top:413.90px;width:140.5px;height:13.69px"><span class="t" style="top:0.34px;transform:scaleX(1.065)">Holmes Replacement Filter for HEPA Air Cleaner</span></div>
<div class="c " style="left:-39.5px;top:427.59px;width:75.7px;height:13.69px"><span class="t r" style="top:0.34px;transform:scaleX(0.957)">26<span style="padding:0 1.25px">/</span>11<span style="padding:0 1.25px">/</span>2015</span></div>
<div class="c " style="left:37.2px;top:427.59px;width:72.9px;height:13.69px"><span class="t" style="top:0.34px;transform:scaleX(1.089)">Standard Class</span></div>
<div class="c " style="left:111.1px;top:427.59px;width:62.9px;height:13.69px"><span class="t" style="top:0.34px;transform:scaleX(0.994)">HP-14815</span></div>
<div class="c " style="left:175.0px;top:427.59px;width:120.9px;height:13.69px"><span class="t" style="top:0.34px;transform:scaleX(1.094)">Harold Pawlan</span></div>
<div class="c " style="left:296.9px;top:427.59px;width:62.6px;height:13.69px"><span class="t" style="top:0.34px;transform:scaleX(1.039)">Home Office</span></div>
<div class="c " style="left:360.5px;top:427.59px;width:65.4px;height:13.69px"><span class="t" style="top:0.34px;transform:scaleX(1.072)">United States</span></div>
<div class="c " style="left:426.9px;top:427.59px;width:97.1px;height:13.69px"><span class="t" style="top:0.34px;transform:scaleX(1.088)">Fort Worth</span></div>
<div class="c " style="left:525.0px;top:427.59px;width:99.0px;height:13.69px"><span class="t" style="top:0.34px;transform:scaleX(1.063)">Texas</span></div>
<div class="c " style="left:625.0px;top:427.59px;width:60.0px;height:13.69px"><span class="t r" style="top:0.34px;transform:scaleX(0.957)">76106</span></div>
<div class="c " style="left:686.0px;top:427.59px;width:37.0px;height:13.69px"><span class="t" style="top:0.34px;transform:scaleX(1.080)">Central</span></div>
<div class="c " style="left:724.0px;top:427.59px;width:90.0px;height:13.69px"><span class="t" style="top:0.34px;transform:scaleX(0.959)">OFF-BI-10000756</span></div>
<div class="c " style="left:815.0px;top:427.59px;width:75.1px;height:13.69px"><span class="t" style="top:0.34px;transform:scaleX(1.043)">Office Supplies</span></div>
<div class="c " style="left:891.1px;top:427.59px;width:66.9px;height:13.69px"><span class="t" style="top:0.34px;transform:scaleX(1.052)">Binders</span></div>
<div class="c " style="left:959.0px;top:427.59px;width:140.5px;height:13.69px"><span class="t" style="top:0.34px;transform:scaleX(1.052)">Storex DuraTech Recycled Plastic Frosted Binders</span></div>
<div class="c " style="left:-39.5px;top:441.27px;width:75.7px;height:13.69px"><span class="t r" style="top:0.34px;transform:scaleX(0.957)">13<span style="padding:0 1.25px">/</span>11<span style="padding:0 1.25px">/</span>2014</span></div>
<div class="c " style="left:37.2px;top:441.27px;width:72.9px;height:13.69px"><span class="t" style="top:0.34px;transform:scaleX(1.089)">Standard Class</span></div>
<div class="c " style="left:111.1px;top:441.27px;width:62.9px;height:13.69px"><span class="t" style="top:0.34px;transform:scaleX(0.970)">PK-19075</span></div>
<div class="c " style="left:175.0px;top:441.27px;width:120.9px;height:13.69px"><span class="t" style="top:0.34px;transform:scaleX(1.043)">Pete Kriz</span></div>
<div class="c " style="left:296.9px;top:441.27px;width:62.6px;height:13.69px"><span class="t" style="top:0.34px;transform:scaleX(1.082)">Consumer</span></div>
<div class="c " style="left:360.5px;top:441.27px;width:65.4px;height:13.69px"><span class="t" style="top:0.34px;transform:scaleX(1.072)">United States</span></div>
<div class="c " style="left:426.9px;top:441.27px;width:97.1px;height:13.69px"><span class="t" style="top:0.34px;transform:scaleX(1.078)">Madison</span></div>
<div class="c " style="left:525.0px;top:441.27px;width:99.0px;height:13.69px"><span class="t" style="top:0.34px;transform:scaleX(1.062)">Wisconsin</span></div>
<div class="c " style="left:625.0px;top:441.27px;width:60.0px;height:13.69px"><span class="t r" style="top:0.34px;transform:scaleX(0.972)">53711</span></div>
<div class="c " style="left:686.0px;top:441.27px;width:37.0px;height:13.69px"><span class="t" style="top:0.34px;transform:scaleX(1.080)">Central</span></div>
<div class="c " style="left:724.0px;top:441.27px;width:90.0px;height:13.69px"><span class="t" style="top:0.34px;transform:scaleX(0.974)">OFF-ST-10004186</span></div>
<div class="c " style="left:815.0px;top:441.27px;width:75.1px;height:13.69px"><span class="t" style="top:0.34px;transform:scaleX(1.043)">Office Supplies</span></div>
<div class="c " style="left:891.1px;top:441.27px;width:66.9px;height:13.69px"><span class="t" style="top:0.34px;transform:scaleX(1.052)">Storage</span></div>
<div class="c " style="left:959.0px;top:441.27px;width:140.5px;height:13.69px"><span class="t" style="top:0.34px;transform:scaleX(1.039)">Stur-D-Stor Shelving, Vertical 5-Shelf</span></div>
<div class="c " style="left:-39.5px;top:454.96px;width:75.7px;height:13.69px"><span class="t r" style="top:0.34px;transform:scaleX(0.957)">15<span style="padding:0 1.25px">/</span>05<span style="padding:0 1.25px">/</span>2014</span></div>
<div class="c " style="left:37.2px;top:454.96px;width:72.9px;height:13.69px"><span class="t" style="top:0.34px;transform:scaleX(1.050)">Second Class</span></div>
<div class="c " style="left:111.1px;top:454.96px;width:62.9px;height:13.69px"><span class="t" style="top:0.34px;transform:scaleX(0.979)">AG-10270</span></div>
<div class="c " style="left:175.0px;top:454.96px;width:120.9px;height:13.69px"><span class="t" style="top:0.34px;transform:scaleX(1.058)">Alejandro Grove</span></div>
<div class="c " style="left:296.9px;top:454.96px;width:62.6px;height:13.69px"><span class="t" style="top:0.34px;transform:scaleX(1.082)">Consumer</span></div>
<div class="c " style="left:360.5px;top:454.96px;width:65.4px;height:13.69px"><span class="t" style="top:0.34px;transform:scaleX(1.072)">United States</span></div>
<div class="c " style="left:426.9px;top:454.96px;width:97.1px;height:13.69px"><span class="t" style="top:0.34px;transform:scaleX(1.081)">West Jordan</span></div>
<div class="c " style="left:525.0px;top:454.96px;width:99.0px;height:13.69px"><span class="t" style="top:0.34px;transform:scaleX(1.091)">Utah</span></div>
<div class="c " style="left:625.0px;top:454.96px;width:60.0px;height:13.69px"><span class="t r" style="top:0.34px;transform:scaleX(0.957)">84084</span></div>
<div class="c " style="left:686.0px;top:454.96px;width:37.0px;height:13.69px"><span class="t" style="top:0.34px;transform:scaleX(1.100)">West</span></div>
<div class="c " style="left:724.0px;top:454.96px;width:90.0px;height:13.69px"><span class="t" style="top:0.34px;transform:scaleX(0.974)">OFF-ST-10000107</span></div>
<div class="c " style="left:815.0px;top:454.96px;width:75.1px;height:13.69px"><span class="t" style="top:0.34px;transform:scaleX(1.043)">Office Supplies</span></div>
<div class="c " style="left:891.1px;top:454.96px;width:66.9px;height:13.69px"><span class="t" style="top:0.34px;transform:scaleX(1.052)">Storage</span></div>
<div class="c " style="left:959.0px;top:454.96px;width:140.5px;height:13.69px"><span class="t" style="top:0.34px;transform:scaleX(1.075)">Fellowes Super Stor/Drawer</span></div>
<div class="c " style="left:-39.5px;top:468.65px;width:75.7px;height:13.69px"><span class="t r" style="top:0.34px;transform:scaleX(0.957)">01<span style="padding:0 1.25px">/</span>09<span style="padding:0 1.25px">/</span>2014</span></div>
<div class="c " style="left:37.2px;top:468.65px;width:72.9px;height:13.69px"><span class="t" style="top:0.34px;transform:scaleX(1.050)">Second Class</span></div>
<div class="c " style="left:111.1px;top:468.65px;width:62.9px;height:13.69px"><span class="t" style="top:0.34px;transform:scaleX(0.982)">ZD-21925</span></div>
<div class="c " style="left:175.0px;top:468.65px;width:120.9px;height:13.69px"><span class="t" style="top:0.34px;transform:scaleX(1.076)">Zuschuss Donatelli</span></div>
<div class="c " style="left:296.9px;top:468.65px;width:62.6px;height:13.69px"><span class="t" style="top:0.34px;transform:scaleX(1.082)">Consumer</span></div>
<div class="c " style="left:360.5px;top:468.65px;width:65.4px;height:13.69px"><span class="t" style="top:0.34px;transform:scaleX(1.072)">United States</span></div>
<div class="c " style="left:426.9px;top:468.65px;width:97.1px;height:13.69px"><span class="t" style="top:0.34px;transform:scaleX(1.039)">San Francisco</span></div>
<div class="c " style="left:525.0px;top:468.65px;width:99.0px;height:13.69px"><span class="t" style="top:0.34px;transform:scaleX(1.058)">California</span></div>
<div class="c " style="left:625.0px;top:468.65px;width:60.0px;height:13.69px"><span class="t r" style="top:0.34px;transform:scaleX(0.957)">94109</span></div>
<div class="c " style="left:686.0px;top:468.65px;width:37.0px;height:13.69px"><span class="t" style="top:0.34px;transform:scaleX(1.100)">West</span></div>
<div class="c " style="left:724.0px;top:468.65px;width:90.0px;height:13.69px"><span class="t" style="top:0.34px;transform:scaleX(0.972)">OFF-AR-10003056</span></div>
<div class="c " style="left:815.0px;top:468.65px;width:75.1px;height:13.69px"><span class="t" style="top:0.34px;transform:scaleX(1.043)">Office Supplies</span></div>
<div class="c " style="left:891.1px;top:468.65px;width:66.9px;height:13.69px"><span class="t" style="top:0.34px;transform:scaleX(1.086)">Art</span></div>
<div class="c " style="left:959.0px;top:468.65px;width:140.5px;height:13.69px"><span class="t" style="top:0.34px;transform:scaleX(1.031)">Newell 341</span></div>
<div class="c " style="left:-39.5px;top:482.34px;width:75.7px;height:13.69px"><span class="t r" style="top:0.34px;transform:scaleX(0.957)">01<span style="padding:0 1.25px">/</span>09<span style="padding:0 1.25px">/</span>2014</span></div>
<div class="c " style="left:37.2px;top:482.34px;width:72.9px;height:13.69px"><span class="t" style="top:0.34px;transform:scaleX(1.050)">Second Class</span></div>
<div class="c " style="left:111.1px;top:482.34px;width:62.9px;height:13.69px"><span class="t" style="top:0.34px;transform:scaleX(0.982)">ZD-21925</span></div>
<div class="c " style="left:175.0px;top:482.34px;width:120.9px;height:13.69px"><span class="t" style="top:0.34px;transform:scaleX(1.076)">Zuschuss Donatelli</span></div>
<div class="c " style="left:296.9px;top:482.34px;width:62.6px;height:13.69px"><span class="t" style="top:0.34px;transform:scaleX(1.082)">Consumer</span></div>
<div class="c " style="left:360.5px;top:482.34px;width:65.4px;height:13.69px"><span class="t" style="top:0.34px;transform:scaleX(1.072)">United States</span></div>
<div class="c " style="left:426.9px;top:482.34px;width:97.1px;height:13.69px"><span class="t" style="top:0.34px;transform:scaleX(1.039)">San Francisco</span></div>
<div class="c " style="left:525.0px;top:482.34px;width:99.0px;height:13.69px"><span class="t" style="top:0.34px;transform:scaleX(1.058)">California</span></div>
<div class="c " style="left:625.0px;top:482.34px;width:60.0px;height:13.69px"><span class="t r" style="top:0.34px;transform:scaleX(0.957)">94109</span></div>
<div class="c " style="left:686.0px;top:482.34px;width:37.0px;height:13.69px"><span class="t" style="top:0.34px;transform:scaleX(1.100)">West</span></div>
<div class="c " style="left:724.0px;top:482.34px;width:90.0px;height:13.69px"><span class="t" style="top:0.34px;transform:scaleX(0.982)">TEC-PH-10001949</span></div>
<div class="c " style="left:815.0px;top:482.34px;width:75.1px;height:13.69px"><span class="t" style="top:0.34px;transform:scaleX(1.059)">Technology</span></div>
<div class="c " style="left:891.1px;top:482.34px;width:66.9px;height:13.69px"><span class="t" style="top:0.34px;transform:scaleX(1.075)">Phones</span></div>
<div class="c " style="left:959.0px;top:482.34px;width:140.5px;height:13.69px"><span class="t" style="top:0.34px;transform:scaleX(1.038)">Cisco SPA 501G IP Phone</span></div>
<div class="c " style="left:-39.5px;top:496.03px;width:75.7px;height:13.69px"><span class="t r" style="top:0.34px;transform:scaleX(0.957)">01<span style="padding:0 1.25px">/</span>09<span style="padding:0 1.25px">/</span>2014</span></div>
<div class="c " style="left:37.2px;top:496.03px;width:72.9px;height:13.69px"><span class="t" style="top:0.34px;transform:scaleX(1.050)">Second Class</span></div>
<div class="c " style="left:111.1px;top:496.03px;width:62.9px;height:13.69px"><span class="t" style="top:0.34px;transform:scaleX(0.982)">ZD-21925</span></div>
<div class="c " style="left:175.0px;top:496.03px;width:120.9px;height:13.69px"><span class="t" style="top:0.34px;transform:scaleX(1.076)">Zuschuss Donatelli</span></div>
<div class="c " style="left:296.9px;top:496.03px;width:62.6px;height:13.69px"><span class="t" style="top:0.34px;transform:scaleX(1.082)">Consumer</span></div>
<div class="c " style="left:360.5px;top:496.03px;width:65.4px;height:13.69px"><span class="t" style="top:0.34px;transform:scaleX(1.072)">United States</span></div>
<div class="c " style="left:426.9px;top:496.03px;width:97.1px;height:13.69px"><span class="t" style="top:0.34px;transform:scaleX(1.039)">San Francisco</span></div>
<div class="c " style="left:525.0px;top:496.03px;width:99.0px;height:13.69px"><span class="t" style="top:0.34px;transform:scaleX(1.058)">California</span></div>
<div class="c " style="left:625.0px;top:496.03px;width:60.0px;height:13.69px"><span class="t r" style="top:0.34px;transform:scaleX(0.957)">94109</span></div>
<div class="c " style="left:686.0px;top:496.03px;width:37.0px;height:13.69px"><span class="t" style="top:0.34px;transform:scaleX(1.100)">West</span></div>
<div class="c " style="left:724.0px;top:496.03px;width:90.0px;height:13.69px"><span class="t" style="top:0.34px;transform:scaleX(0.959)">OFF-BI-10002215</span></div>
<div class="c " style="left:815.0px;top:496.03px;width:75.1px;height:13.69px"><span class="t" style="top:0.34px;transform:scaleX(1.043)">Office Supplies</span></div>
<div class="c " style="left:891.1px;top:496.03px;width:66.9px;height:13.69px"><span class="t" style="top:0.34px;transform:scaleX(1.052)">Binders</span></div>
<div class="c " style="left:959.0px;top:496.03px;width:140.5px;height:13.69px"><span class="t" style="top:0.34px;transform:scaleX(1.061)">Wilson Jones Hanging View Binder, White</span></div>
<div class="c " style="left:-39.5px;top:509.72px;width:75.7px;height:13.69px"><span class="t r" style="top:0.34px;transform:scaleX(0.957)">13<span style="padding:0 1.25px">/</span>12<span style="padding:0 1.25px">/</span>2016</span></div>
<div class="c " style="left:37.2px;top:509.72px;width:72.9px;height:13.69px"><span class="t" style="top:0.34px;transform:scaleX(1.089)">Standard Class</span></div>
<div class="c " style="left:111.1px;top:509.72px;width:62.9px;height:13.69px"><span class="t" style="top:0.34px;transform:scaleX(0.946)">KB-16585</span></div>
<div class="c " style="left:175.0px;top:509.72px;width:120.9px;height:13.69px"><span class="t" style="top:0.34px;transform:scaleX(1.010)">Ken Black</span></div>
<div class="c " style="left:296.9px;top:509.72px;width:62.6px;height:13.69px"><span class="t" style="top:0.34px;transform:scaleX(1.084)">Corporate</span></div>
<div class="c " style="left:360.5px;top:509.72px;width:65.4px;height:13.69px"><span class="t" style="top:0.34px;transform:scaleX(1.072)">United States</span></div>
<div class="c " style="left:426.9px;top:509.72px;width:97.1px;height:13.69px"><span class="t" style="top:0.34px;transform:scaleX(1.068)">Fremont</span></div>
<div class="c " style="left:525.0px;top:509.72px;width:99.0px;height:13.69px"><span class="t" style="top:0.34px;transform:scaleX(1.089)">Nebraska</span></div>
<div class="c " style="left:625.0px;top:509.72px;width:60.0px;height:13.69px"><span class="t r" style="top:0.34px;transform:scaleX(0.957)">68025</span></div>
<div class="c " style="left:686.0px;top:509.72px;width:37.0px;height:13.69px"><span class="t" style="top:0.34px;transform:scaleX(1.080)">Central</span></div>
<div class="c " style="left:724.0px;top:509.72px;width:90.0px;height:13.69px"><span class="t" style="top:0.34px;transform:scaleX(0.972)">OFF-AR-10000246</span></div>
<div class="c " style="left:815.0px;top:509.72px;width:75.1px;height:13.69px"><span class="t" style="top:0.34px;transform:scaleX(1.043)">Office Supplies</span></div>
<div class="c " style="left:891.1px;top:509.72px;width:66.9px;height:13.69px"><span class="t" style="top:0.34px;transform:scaleX(1.086)">Art</span></div>
<div class="c " style="left:959.0px;top:509.72px;width:140.5px;height:13.69px"><span class="t" style="top:0.34px;transform:scaleX(1.031)">Newell 318</span></div>
<div class="c " style="left:-39.5px;top:523.41px;width:75.7px;height:13.69px"><span class="t r" style="top:0.34px;transform:scaleX(0.957)">13<span style="padding:0 1.25px">/</span>12<span style="padding:0 1.25px">/</span>2016</span></div>
<div class="c " style="left:37.2px;top:523.41px;width:72.9px;height:13.69px"><span class="t" style="top:0.34px;transform:scaleX(1.089)">Standard Class</span></div>
<div class="c " style="left:111.1px;top:523.41px;width:62.9px;height:13.69px"><span class="t" style="top:0.34px;transform:scaleX(0.946)">KB-16585</span></div>
<div class="c " style="left:175.0px;top:523.41px;width:120.9px;height:13.69px"><span class="t" style="top:0.34px;transform:scaleX(1.010)">Ken Black</span></div>
<div class="c " style="left:296.9px;top:523.41px;width:62.6px;height:13.69px"><span class="t" style="top:0.34px;transform:scaleX(1.084)">Corporate</span></div>
<div class="c " style="left:360.5px;top:523.41px;width:65.4px;height:13.69px"><span class="t" style="top:0.34px;transform:scaleX(1.072)">United States</span></div>
<div class="c " style="left:426.9px;top:523.41px;width:97.1px;height:13.69px"><span class="t" style="top:0.34px;transform:scaleX(1.068)">Fremont</span></div>
<div class="c " style="left:525.0px;top:523.41px;width:99.0px;height:13.69px"><span class="t" style="top:0.34px;transform:scaleX(1.089)">Nebraska</span></div>
<div class="c " style="left:625.0px;top:523.41px;width:60.0px;height:13.69px"><span class="t r" style="top:0.34px;transform:scaleX(0.957)">68025</span></div>
<div class="c " style="left:686.0px;top:523.41px;width:37.0px;height:13.69px"><span class="t" style="top:0.34px;transform:scaleX(1.080)">Central</span></div>
<div class="c " style="left:724.0px;top:523.41px;width:90.0px;height:13.69px"><span class="t" style="top:0.34px;transform:scaleX(0.978)">OFF-AP-10001492</span></div>
<div class="c " style="left:815.0px;top:523.41px;width:75.1px;height:13.69px"><span class="t" style="top:0.34px;transform:scaleX(1.043)">Office Supplies</span></div>
<div class="c " style="left:891.1px;top:523.41px;width:66.9px;height:13.69px"><span class="t" style="top:0.34px;transform:scaleX(1.073)">Appliances</span></div>
<div class="c " style="left:959.0px;top:523.41px;width:140.5px;height:13.69px"><span class="t" style="top:0.34px;transform:scaleX(1.042)">Acco Six-Outlet Power Strip</span></div>
<div class="c " style="left:-39.5px;top:537.10px;width:75.7px;height:13.69px"><span class="t r" style="top:0.34px;transform:scaleX(0.957)">18<span style="padding:0 1.25px">/</span>07<span style="padding:0 1.25px">/</span>2017</span></div>
<div class="c " style="left:37.2px;top:537.10px;width:72.9px;height:13.69px"><span class="t" style="top:0.34px;transform:scaleX(1.050)">Second Class</span></div>
<div class="c " style="left:111.1px;top:537.10px;width:62.9px;height:13.69px"><span class="t" style="top:0.34px;transform:scaleX(0.950)">SF-20065</span></div>
<div class="c " style="left:175.0px;top:537.10px;width:120.9px;height:13.69px"><span class="t" style="top:0.34px;transform:scaleX(1.078)">Sandra Flanagan</span></div>
<div class="c " style="left:296.9px;top:537.10px;width:62.6px;height:13.69px"><span class="t" style="top:0.34px;transform:scaleX(1.082)">Consumer</span></div>
<div class="c " style="left:360.5px;top:537.10px;width:65.4px;height:13.69px"><span class="t" style="top:0.34px;transform:scaleX(1.072)">United States</span></div>
<div class="c " style="left:426.9px;top:537.10px;width:97.1px;height:13.69px"><span class="t" style="top:0.34px;transform:scaleX(1.086)">Philadelphia</span></div>
<div class="c " style="left:525.0px;top:537.10px;width:99.0px;height:13.69px"><span class="t" style="top:0.34px;transform:scaleX(1.081)">Pennsylvania</span></div>
<div class="c " style="left:625.0px;top:537.10px;width:60.0px;height:13.69px"><span class="t r" style="top:0.34px;transform:scaleX(0.957)">19140</span></div>
<div class="c " style="left:686.0px;top:537.10px;width:37.0px;height:13.69px"><span class="t" style="top:0.34px;transform:scaleX(1.065)">East</span></div>
<div class="c " style="left:724.0px;top:537.10px;width:90.0px;height:13.69px"><span class="t" style="top:0.34px;transform:scaleX(0.983)">FUR-CH-10002774</span></div>
<div class="c " style="left:815.0px;top:537.10px;width:75.1px;height:13.69px"><span class="t" style="top:0.34px;transform:scaleX(1.092)">Furniture</span></div>
<div class="c " style="left:891.1px;top:537.10px;width:66.9px;height:13.69px"><span class="t" style="top:0.34px;transform:scaleX(1.079)">Chairs</span></div>
<div class="c " style="left:959.0px;top:537.10px;width:140.5px;height:13.69px"><span class="t" style="top:0.34px;transform:scaleX(1.053)">Global Deluxe Stacking Chair, Gray</span></div>
<div class="c " style="left:-39.5px;top:550.79px;width:75.7px;height:13.69px"><span class="t r" style="top:0.34px;transform:scaleX(0.957)">30<span style="padding:0 1.25px">/</span>09<span style="padding:0 1.25px">/</span>2015</span></div>
<div class="c " style="left:37.2px;top:550.79px;width:72.9px;height:13.69px"><span class="t" style="top:0.34px;transform:scaleX(1.089)">Standard Class</span></div>
<div class="c " style="left:111.1px;top:550.79px;width:62.9px;height:13.69px"><span class="t" style="top:0.34px;transform:scaleX(0.944)">EB-13870</span></div>
<div class="c " style="left:175.0px;top:550.79px;width:120.9px;height:13.69px"><span class="t" style="top:0.34px;transform:scaleX(1.046)">Emily Burns</span></div>
<div class="c " style="left:296.9px;top:550.79px;width:62.6px;height:13.69px"><span class="t" style="top:0.34px;transform:scaleX(1.082)">Consumer</span></div>
<div class="c " style="left:360.5px;top:550.79px;width:65.4px;height:13.69px"><span class="t" style="top:0.34px;transform:scaleX(1.072)">United States</span></div>
<div class="c " style="left:426.9px;top:550.79px;width:97.1px;height:13.69px"><span class="t" style="top:0.34px;transform:scaleX(1.069)">Orem</span></div>
<div class="c " style="left:525.0px;top:550.79px;width:99.0px;height:13.69px"><span class="t" style="top:0.34px;transform:scaleX(1.091)">Utah</span></div>
<div class="c " style="left:625.0px;top:550.79px;width:60.0px;height:13.69px"><span class="t r" style="top:0.34px;transform:scaleX(0.957)">84057</span></div>
<div class="c " style="left:686.0px;top:550.79px;width:37.0px;height:13.69px"><span class="t" style="top:0.34px;transform:scaleX(1.100)">West</span></div>
<div class="c " style="left:724.0px;top:550.79px;width:90.0px;height:13.69px"><span class="t" style="top:0.34px;transform:scaleX(0.981)">FUR-TA-10000577</span></div>
<div class="c " style="left:815.0px;top:550.79px;width:75.1px;height:13.69px"><span class="t" style="top:0.34px;transform:scaleX(1.092)">Furniture</span></div>
<div class="c " style="left:891.1px;top:550.79px;width:66.9px;height:13.69px"><span class="t" style="top:0.34px;transform:scaleX(1.074)">Tables</span></div>
<div class="c " style="left:959.0px;top:550.79px;width:140.5px;height:13.69px"><span class="t" style="top:0.34px;transform:scaleX(1.036)">Bretford CR4500 Series Slim Rectangular Table</span></div>
<div class="c " style="left:-39.5px;top:564.48px;width:75.7px;height:13.69px"><span class="t r" style="top:0.34px;transform:scaleX(0.957)">20<span style="padding:0 1.25px">/</span>01<span style="padding:0 1.25px">/</span>2016</span></div>
<div class="c " style="left:37.2px;top:564.48px;width:72.9px;height:13.69px"><span class="t" style="top:0.34px;transform:scaleX(1.050)">Second Class</span></div>
<div class="c " style="left:111.1px;top:564.48px;width:62.9px;height:13.69px"><span class="t" style="top:0.34px;transform:scaleX(0.983)">EH-13945</span></div>
<div class="c " style="left:175.0px;top:564.48px;width:120.9px;height:13.69px"><span class="t" style="top:0.34px;transform:scaleX(1.055)">Eric Hoffmann</span></div>
<div class="c " style="left:296.9px;top:564.48px;width:62.6px;height:13.69px"><span class="t" style="top:0.34px;transform:scaleX(1.082)">Consumer</span></div>
<div class="c " style="left:360.5px;top:564.48px;width:65.4px;height:13.69px"><span class="t" style="top:0.34px;transform:scaleX(1.072)">United States</span></div>
<div class="c " style="left:426.9px;top:564.48px;width:97.1px;height:13.69px"><span class="t" style="top:0.34px;transform:scaleX(1.060)">Los Angeles</span></div>
<div class="c " style="left:525.0px;top:564.48px;width:99.0px;height:13.69px"><span class="t" style="top:0.34px;transform:scaleX(1.058)">California</span></div>
<div class="c " style="left:625.0px;top:564.48px;width:60.0px;height:13.69px"><span class="t r" style="top:0.34px;transform:scaleX(0.957)">90049</span></div>
<div class="c " style="left:686.0px;top:564.48px;width:37.0px;height:13.69px"><span class="t" style="top:0.34px;transform:scaleX(1.100)">West</span></div>
<div class="c " style="left:724.0px;top:564.48px;width:90.0px;height:13.69px"><span class="t" style="top:0.34px;transform:scaleX(0.959)">OFF-BI-10001634</span></div>
<div class="c " style="left:815.0px;top:564.48px;width:75.1px;height:13.69px"><span class="t" style="top:0.34px;transform:scaleX(1.043)">Office Supplies</span></div>
<div class="c " style="left:891.1px;top:564.48px;width:66.9px;height:13.69px"><span class="t" style="top:0.34px;transform:scaleX(1.052)">Binders</span></div>
<div class="c " style="left:959.0px;top:564.48px;width:140.5px;height:13.69px"><span class="t" style="top:0.34px;transform:scaleX(1.052)">Wilson Jones Active Use Binders</span></div>
<div class="c " style="left:-39.5px;top:578.16px;width:75.7px;height:13.69px"><span class="t r" style="top:0.34px;transform:scaleX(0.957)">20<span style="padding:0 1.25px">/</span>01<span style="padding:0 1.25px">/</span>2016</span></div>
<div class="c " style="left:37.2px;top:578.16px;width:72.9px;height:13.69px"><span class="t" style="top:0.34px;transform:scaleX(1.050)">Second Class</span></div>
<div class="c " style="left:111.1px;top:578.16px;width:62.9px;height:13.69px"><span class="t" style="top:0.34px;transform:scaleX(0.983)">EH-13945</span></div>
<div class="c " style="left:175.0px;top:578.16px;width:120.9px;height:13.69px"><span class="t" style="top:0.34px;transform:scaleX(1.055)">Eric Hoffmann</span></div>
<div class="c " style="left:296.9px;top:578.16px;width:62.6px;height:13.69px"><span class="t" style="top:0.34px;transform:scaleX(1.082)">Consumer</span></div>
<div class="c " style="left:360.5px;top:578.16px;width:65.4px;height:13.69px"><span class="t" style="top:0.34px;transform:scaleX(1.072)">United States</span></div>
<div class="c " style="left:426.9px;top:578.16px;width:97.1px;height:13.69px"><span class="t" style="top:0.34px;transform:scaleX(1.060)">Los Angeles</span></div>
<div class="c " style="left:525.0px;top:578.16px;width:99.0px;height:13.69px"><span class="t" style="top:0.34px;transform:scaleX(1.058)">California</span></div>
<div class="c " style="left:625.0px;top:578.16px;width:60.0px;height:13.69px"><span class="t r" style="top:0.34px;transform:scaleX(0.957)">90049</span></div>
<div class="c " style="left:686.0px;top:578.16px;width:37.0px;height:13.69px"><span class="t" style="top:0.34px;transform:scaleX(1.100)">West</span></div>
<div class="c " style="left:724.0px;top:578.16px;width:90.0px;height:13.69px"><span class="t" style="top:0.34px;transform:scaleX(0.975)">TEC-AC-10003027</span></div>
<div class="c " style="left:815.0px;top:578.16px;width:75.1px;height:13.69px"><span class="t" style="top:0.34px;transform:scaleX(1.059)">Technology</span></div>
<div class="c " style="left:891.1px;top:578.16px;width:66.9px;height:13.69px"><span class="t" style="top:0.34px;transform:scaleX(1.044)">Accessories</span></div>
<div class="c " style="left:959.0px;top:578.16px;width:140.5px;height:13.69px"><span class="t" style="top:0.34px;transform:scaleX(1.031)">Imation 8GB Mini TravelDrive USB</span></div>
<div class="c " style="left:-39.5px;top:591.85px;width:75.7px;height:13.69px"><span class="t r" style="top:0.34px;transform:scaleX(0.957)">21<span style="padding:0 1.25px">/</span>09<span style="padding:0 1.25px">/</span>2015</span></div>
<div class="c " style="left:37.2px;top:591.85px;width:72.9px;height:13.69px"><span class="t" style="top:0.34px;transform:scaleX(1.089)">Standard Class</span></div>
<div class="c " style="left:111.1px;top:591.85px;width:62.9px;height:13.69px"><span class="t" style="top:0.34px;transform:scaleX(0.945)">TB-21520</span></div>
<div class="c " style="left:175.0px;top:591.85px;width:120.9px;height:13.69px"><span class="t" style="top:0.34px;transform:scaleX(1.055)">Tracy Blumstein</span></div>
<div class="c " style="left:296.9px;top:591.85px;width:62.6px;height:13.69px"><span class="t" style="top:0.34px;transform:scaleX(1.082)">Consumer</span></div>
<div class="c " style="left:360.5px;top:591.85px;width:65.4px;height:13.69px"><span class="t" style="top:0.34px;transform:scaleX(1.072)">United States</span></div>
<div class="c " style="left:426.9px;top:591.85px;width:97.1px;height:13.69px"><span class="t" style="top:0.34px;transform:scaleX(1.086)">Philadelphia</span></div>
<div class="c " style="left:525.0px;top:591.85px;width:99.0px;height:13.69px"><span class="t" style="top:0.34px;transform:scaleX(1.081)">Pennsylvania</span></div>
<div class="c " style="left:625.0px;top:591.85px;width:60.0px;height:13.69px"><span class="t r" style="top:0.34px;transform:scaleX(0.957)">19140</span></div>
<div class="c " style="left:686.0px;top:591.85px;width:37.0px;height:13.69px"><span class="t" style="top:0.34px;transform:scaleX(1.065)">East</span></div>
<div class="c " style="left:724.0px;top:591.85px;width:90.0px;height:13.69px"><span class="t" style="top:0.34px;transform:scaleX(0.965)">FUR-BO-10004834</span></div>
<div class="c " style="left:815.0px;top:591.85px;width:75.1px;height:13.69px"><span class="t" style="top:0.34px;transform:scaleX(1.092)">Furniture</span></div>
<div class="c " style="left:891.1px;top:591.85px;width:66.9px;height:13.69px"><span class="t" style="top:0.34px;transform:scaleX(1.029)">Bookcases</span></div>
<div class="c " style="left:959.0px;top:591.85px;width:140.5px;height:13.69px"><span class="t" style="top:0.34px;transform:scaleX(1.049)">Riverside Palais Royal Lawyers Bookcase</span></div>
<div class="c " style="left:-39.5px;top:605.54px;width:75.7px;height:13.69px"><span class="t r" style="top:0.34px;transform:scaleX(0.957)">21<span style="padding:0 1.25px">/</span>09<span style="padding:0 1.25px">/</span>2015</span></div>
<div class="c " style="left:37.2px;top:605.54px;width:72.9px;height:13.69px"><span class="t" style="top:0.34px;transform:scaleX(1.089)">Standard Class</span></div>
<div class="c " style="left:111.1px;top:605.54px;width:62.9px;height:13.69px"><span class="t" style="top:0.34px;transform:scaleX(0.945)">TB-21520</span></div>
<div class="c " style="left:175.0px;top:605.54px;width:120.9px;height:13.69px"><span class="t" style="top:0.34px;transform:scaleX(1.055)">Tracy Blumstein</span></div>
<div class="c " style="left:296.9px;top:605.54px;width:62.6px;height:13.69px"><span class="t" style="top:0.34px;transform:scaleX(1.082)">Consumer</span></div>
<div class="c " style="left:360.5px;top:605.54px;width:65.4px;height:13.69px"><span class="t" style="top:0.34px;transform:scaleX(1.072)">United States</span></div>
<div class="c " style="left:426.9px;top:605.54px;width:97.1px;height:13.69px"><span class="t" style="top:0.34px;transform:scaleX(1.086)">Philadelphia</span></div>
<div class="c " style="left:525.0px;top:605.54px;width:99.0px;height:13.69px"><span class="t" style="top:0.34px;transform:scaleX(1.081)">Pennsylvania</span></div>
<div class="c " style="left:625.0px;top:605.54px;width:60.0px;height:13.69px"><span class="t r" style="top:0.34px;transform:scaleX(0.957)">19140</span></div>
<div class="c " style="left:686.0px;top:605.54px;width:37.0px;height:13.69px"><span class="t" style="top:0.34px;transform:scaleX(1.065)">East</span></div>
<div class="c " style="left:724.0px;top:605.54px;width:90.0px;height:13.69px"><span class="t" style="top:0.34px;transform:scaleX(0.959)">OFF-BI-10000474</span></div>
<div class="c " style="left:815.0px;top:605.54px;width:75.1px;height:13.69px"><span class="t" style="top:0.34px;transform:scaleX(1.043)">Office Supplies</span></div>
<div class="c " style="left:891.1px;top:605.54px;width:66.9px;height:13.69px"><span class="t" style="top:0.34px;transform:scaleX(1.052)">Binders</span></div>
<div class="c " style="left:959.0px;top:605.54px;width:140.5px;height:13.69px"><span class="t" style="top:0.34px;transform:scaleX(1.044)">Avery Recycled Flexi-View Covers</span></div>
<div class="c " style="left:-39.5px;top:619.23px;width:75.7px;height:13.69px"><span class="t r" style="top:0.34px;transform:scaleX(0.957)">21<span style="padding:0 1.25px">/</span>09<span style="padding:0 1.25px">/</span>2015</span></div>
<div class="c " style="left:37.2px;top:619.23px;width:72.9px;height:13.69px"><span class="t" style="top:0.34px;transform:scaleX(1.089)">Standard Class</span></div>
<div class="c " style="left:111.1px;top:619.23px;width:62.9px;height:13.69px"><span class="t" style="top:0.34px;transform:scaleX(0.945)">TB-21520</span></div>
<div class="c " style="left:175.0px;top:619.23px;width:120.9px;height:13.69px"><span class="t" style="top:0.34px;transform:scaleX(1.055)">Tracy Blumstein</span></div>
<div class="c " style="left:296.9px;top:619.23px;width:62.6px;height:13.69px"><span class="t" style="top:0.34px;transform:scaleX(1.082)">Consumer</span></div>
<div class="c " style="left:360.5px;top:619.23px;width:65.4px;height:13.69px"><span class="t" style="top:0.34px;transform:scaleX(1.072)">United States</span></div>
<div class="c " style="left:426.9px;top:619.23px;width:97.1px;height:13.69px"><span class="t" style="top:0.34px;transform:scaleX(1.086)">Philadelphia</span></div>
<div class="c " style="left:525.0px;top:619.23px;width:99.0px;height:13.69px"><span class="t" style="top:0.34px;transform:scaleX(1.081)">Pennsylvania</span></div>
<div class="c " style="left:625.0px;top:619.23px;width:60.0px;height:13.69px"><span class="t r" style="top:0.34px;transform:scaleX(0.957)">19140</span></div>
<div class="c " style="left:686.0px;top:619.23px;width:37.0px;height:13.69px"><span class="t" style="top:0.34px;transform:scaleX(1.065)">East</span></div>
<div class="c " style="left:724.0px;top:619.23px;width:90.0px;height:13.69px"><span class="t" style="top:0.34px;transform:scaleX(0.971)">FUR-FU-10004848</span></div>
<div class="c " style="left:815.0px;top:619.23px;width:75.1px;height:13.69px"><span class="t" style="top:0.34px;transform:scaleX(1.092)">Furniture</span></div>
<div class="c " style="left:891.1px;top:619.23px;width:66.9px;height:13.69px"><span class="t" style="top:0.34px;transform:scaleX(1.082)">Furnishings</span></div>
<div class="c " style="left:959.0px;top:619.23px;width:140.5px;height:13.69px"><span class="t" style="top:0.34px;transform:scaleX(1.066)">Howard Miller 13-3/4 Diameter</span></div>
<div class="c " style="left:-39.5px;top:632.92px;width:75.7px;height:13.69px"><span class="t r" style="top:0.34px;transform:scaleX(0.957)">21<span style="padding:0 1.25px">/</span>09<span style="padding:0 1.25px">/</span>2015</span></div>
<div class="c " style="left:37.2px;top:632.92px;width:72.9px;height:13.69px"><span class="t" style="top:0.34px;transform:scaleX(1.089)">Standard Class</span></div>
<div class="c " style="left:111.1px;top:632.92px;width:62.9px;height:13.69px"><span class="t" style="top:0.34px;transform:scaleX(0.945)">TB-21520</span></div>
<div class="c " style="left:175.0px;top:632.92px;width:120.9px;height:13.69px"><span class="t" style="top:0.34px;transform:scaleX(1.055)">Tracy Blumstein</span></div>
<div class="c " style="left:296.9px;top:632.92px;width:62.6px;height:13.69px"><span class="t" style="top:0.34px;transform:scaleX(1.082)">Consumer</span></div>
<div class="c " style="left:360.5px;top:632.92px;width:65.4px;height:13.69px"><span class="t" style="top:0.34px;transform:scaleX(1.072)">United States</span></div>
<div class="c " style="left:426.9px;top:632.92px;width:97.1px;height:13.69px"><span class="t" style="top:0.34px;transform:scaleX(1.086)">Philadelphia</span></div>
<div class="c " style="left:525.0px;top:632.92px;width:99.0px;height:13.69px"><span class="t" style="top:0.34px;transform:scaleX(1.081)">Pennsylvania</span></div>
<div class="c " style="left:625.0px;top:632.92px;width:60.0px;height:13.69px"><span class="t r" style="top:0.34px;transform:scaleX(0.957)">19140</span></div>
<div class="c " style="left:686.0px;top:632.92px;width:37.0px;height:13.69px"><span class="t" style="top:0.34px;transform:scaleX(1.065)">East</span></div>
<div class="c " style="left:724.0px;top:632.92px;width:90.0px;height:13.69px"><span class="t" style="top:0.34px;transform:scaleX(0.979)">OFF-EN-10001509</span></div>
<div class="c " style="left:815.0px;top:632.92px;width:75.1px;height:13.69px"><span class="t" style="top:0.34px;transform:scaleX(1.043)">Office Supplies</span></div>
<div class="c " style="left:891.1px;top:632.92px;width:66.9px;height:13.69px"><span class="t" style="top:0.34px;transform:scaleX(1.060)">Envelopes</span></div>
<div class="c " style="left:959.0px;top:632.92px;width:140.5px;height:13.69px"><span class="t" style="top:0.34px;transform:scaleX(1.052)">Poly String Tie Envelopes</span></div>
<div class="c " style="left:-39.5px;top:646.61px;width:75.7px;height:13.69px"><span class="t r" style="top:0.34px;transform:scaleX(0.957)">21<span style="padding:0 1.25px">/</span>09<span style="padding:0 1.25px">/</span>2015</span></div>
<div class="c " style="left:37.2px;top:646.61px;width:72.9px;height:13.69px"><span class="t" style="top:0.34px;transform:scaleX(1.089)">Standard Class</span></div>
<div class="c " style="left:111.1px;top:646.61px;width:62.9px;height:13.69px"><span class="t" style="top:0.34px;transform:scaleX(0.945)">TB-21520</span></div>
<div class="c " style="left:175.0px;top:646.61px;width:120.9px;height:13.69px"><span class="t" style="top:0.34px;transform:scaleX(1.055)">Tracy Blumstein</span></div>
<div class="c " style="left:296.9px;top:646.61px;width:62.6px;height:13.69px"><span class="t" style="top:0.34px;transform:scaleX(1.082)">Consumer</span></div>
<div class="c " style="left:360.5px;top:646.61px;width:65.4px;height:13.69px"><span class="t" style="top:0.34px;transform:scaleX(1.072)">United States</span></div>
<div class="c " style="left:426.9px;top:646.61px;width:97.1px;height:13.69px"><span class="t" style="top:0.34px;transform:scaleX(1.086)">Philadelphia</span></div>
<div class="c " style="left:525.0px;top:646.61px;width:99.0px;height:13.69px"><span class="t" style="top:0.34px;transform:scaleX(1.081)">Pennsylvania</span></div>
<div class="c " style="left:625.0px;top:646.61px;width:60.0px;height:13.69px"><span class="t r" style="top:0.34px;transform:scaleX(0.957)">19140</span></div>
<div class="c " style="left:686.0px;top:646.61px;width:37.0px;height:13.69px"><span class="t" style="top:0.34px;transform:scaleX(1.065)">East</span></div>
<div class="c " style="left:724.0px;top:646.61px;width:90.0px;height:13.69px"><span class="t" style="top:0.34px;transform:scaleX(0.972)">OFF-AR-10004042</span></div>
<div class="c " style="left:815.0px;top:646.61px;width:75.1px;height:13.69px"><span class="t" style="top:0.34px;transform:scaleX(1.043)">Office Supplies</span></div>
<div class="c " style="left:891.1px;top:646.61px;width:66.9px;height:13.69px"><span class="t" style="top:0.34px;transform:scaleX(1.086)">Art</span></div>
<div class="c " style="left:959.0px;top:646.61px;width:140.5px;height:13.69px"><span class="t" style="top:0.34px;transform:scaleX(1.030)">BOSTON Model 1800 Electric Pencil Sharpeners</span></div>
<div class="c " style="left:-39.5px;top:660.30px;width:75.7px;height:13.69px"><span class="t r" style="top:0.34px;transform:scaleX(0.957)">21<span style="padding:0 1.25px">/</span>09<span style="padding:0 1.25px">/</span>2015</span></div>
<div class="c " style="left:37.2px;top:660.30px;width:72.9px;height:13.69px"><span class="t" style="top:0.34px;transform:scaleX(1.089)">Standard Class</span></div>
<div class="c " style="left:111.1px;top:660.30px;width:62.9px;height:13.69px"><span class="t" style="top:0.34px;transform:scaleX(0.945)">TB-21520</span></div>
<div class="c " style="left:175.0px;top:660.30px;width:120.9px;height:13.69px"><span class="t" style="top:0.34px;transform:scaleX(1.055)">Tracy Blumstein</span></div>
<div class="c " style="left:296.9px;top:660.30px;width:62.6px;height:13.69px"><span class="t" style="top:0.34px;transform:scaleX(1.082)">Consumer</span></div>
<div class="c " style="left:360.5px;top:660.30px;width:65.4px;height:13.69px"><span class="t" style="top:0.34px;transform:scaleX(1.072)">United States</span></div>
<div class="c " style="left:426.9px;top:660.30px;width:97.1px;height:13.69px"><span class="t" style="top:0.34px;transform:scaleX(1.086)">Philadelphia</span></div>
<div class="c " style="left:525.0px;top:660.30px;width:99.0px;height:13.69px"><span class="t" style="top:0.34px;transform:scaleX(1.081)">Pennsylvania</span></div>
<div class="c " style="left:625.0px;top:660.30px;width:60.0px;height:13.69px"><span class="t r" style="top:0.34px;transform:scaleX(0.957)">19140</span></div>
<div class="c " style="left:686.0px;top:660.30px;width:37.0px;height:13.69px"><span class="t" style="top:0.34px;transform:scaleX(1.065)">East</span></div>
<div class="c " style="left:724.0px;top:660.30px;width:90.0px;height:13.69px"><span class="t" style="top:0.34px;transform:scaleX(0.959)">OFF-BI-10001525</span></div>
<div class="c " style="left:815.0px;top:660.30px;width:75.1px;height:13.69px"><span class="t" style="top:0.34px;transform:scaleX(1.043)">Office Supplies</span></div>
<div class="c " style="left:891.1px;top:660.30px;width:66.9px;height:13.69px"><span class="t" style="top:0.34px;transform:scaleX(1.052)">Binders</span></div>
<div class="c " style="left:959.0px;top:660.30px;width:140.5px;height:13.69px"><span class="t" style="top:0.34px;transform:scaleX(1.065)">Acco Pressboard Covers with Storage Hooks</span></div>
<div class="c " style="left:-39.5px;top:673.99px;width:75.7px;height:13.69px"><span class="t r" style="top:0.34px;transform:scaleX(0.957)">21<span style="padding:0 1.25px">/</span>09<span style="padding:0 1.25px">/</span>2015</span></div>
<div class="c " style="left:37.2px;top:673.99px;width:72.9px;height:13.69px"><span class="t" style="top:0.34px;transform:scaleX(1.089)">Standard Class</span></div>
<div class="c " style="left:111.1px;top:673.99px;width:62.9px;height:13.69px"><span class="t" style="top:0.34px;transform:scaleX(0.945)">TB-21520</span></div>
<div class="c " style="left:175.0px;top:673.99px;width:120.9px;height:13.69px"><span class="t" style="top:0.34px;transform:scaleX(1.055)">Tracy Blumstein</span></div>
<div class="c " style="left:296.9px;top:673.99px;width:62.6px;height:13.69px"><span class="t" style="top:0.34px;transform:scaleX(1.082)">Consumer</span></div>
<div class="c " style="left:360.5px;top:673.99px;width:65.4px;height:13.69px"><span class="t" style="top:0.34px;transform:scaleX(1.072)">United States</span></div>
<div class="c " style="left:426.9px;top:673.99px;width:97.1px;height:13.69px"><span class="t" style="top:0.34px;transform:scaleX(1.086)">Philadelphia</span></div>
<div class="c " style="left:525.0px;top:673.99px;width:99.0px;height:13.69px"><span class="t" style="top:0.34px;transform:scaleX(1.081)">Pennsylvania</span></div>
<div class="c " style="left:625.0px;top:673.99px;width:60.0px;height:13.69px"><span class="t r" style="top:0.34px;transform:scaleX(0.957)">19140</span></div>
<div class="c " style="left:686.0px;top:673.99px;width:37.0px;height:13.69px"><span class="t" style="top:0.34px;transform:scaleX(1.065)">East</span></div>
<div class="c " style="left:724.0px;top:673.99px;width:90.0px;height:13.69px"><span class="t" style="top:0.34px;transform:scaleX(0.972)">OFF-AR-10001683</span></div>
<div class="c " style="left:815.0px;top:673.99px;width:75.1px;height:13.69px"><span class="t" style="top:0.34px;transform:scaleX(1.043)">Office Supplies</span></div>
<div class="c " style="left:891.1px;top:673.99px;width:66.9px;height:13.69px"><span class="t" style="top:0.34px;transform:scaleX(1.086)">Art</span></div>
<div class="c " style="left:959.0px;top:673.99px;width:140.5px;height:13.69px"><span class="t" style="top:0.34px;transform:scaleX(1.071)">Lumber Crayons</span></div>
<div class="c " style="left:-39.5px;top:687.68px;width:75.7px;height:13.69px"><span class="t r" style="top:0.34px;transform:scaleX(0.957)">23<span style="padding:0 1.25px">/</span>10<span style="padding:0 1.25px">/</span>2017</span></div>
<div class="c " style="left:37.2px;top:687.68px;width:72.9px;height:13.69px"><span class="t" style="top:0.34px;transform:scaleX(1.050)">Second Class</span></div>
<div class="c " style="left:111.1px;top:687.68px;width:62.9px;height:13.69px"><span class="t" style="top:0.34px;transform:scaleX(0.982)">MA-17560</span></div>
<div class="c " style="left:175.0px;top:687.68px;width:120.9px;height:13.69px"><span class="t" style="top:0.34px;transform:scaleX(1.083)">Matt Abelman</span></div>
<div class="c " style="left:296.9px;top:687.68px;width:62.6px;height:13.69px"><span class="t" style="top:0.34px;transform:scaleX(1.039)">Home Office</span></div>
<div class="c " style="left:360.5px;top:687.68px;width:65.4px;height:13.69px"><span class="t" style="top:0.34px;transform:scaleX(1.072)">United States</span></div>
<div class="c " style="left:426.9px;top:687.68px;width:97.1px;height:13.69px"><span class="t" style="top:0.34px;transform:scaleX(1.102)">Houston</span></div>
<div class="c " style="left:525.0px;top:687.68px;width:99.0px;height:13.69px"><span class="t" style="top:0.34px;transform:scaleX(1.063)">Texas</span></div>
<div class="c " style="left:625.0px;top:687.68px;width:60.0px;height:13.69px"><span class="t r" style="top:0.34px;transform:scaleX(0.957)">77095</span></div>
<div class="c " style="left:686.0px;top:687.68px;width:37.0px;height:13.69px"><span class="t" style="top:0.34px;transform:scaleX(1.080)">Central</span></div>
<div class="c " style="left:724.0px;top:687.68px;width:90.0px;height:13.69px"><span class="t" style="top:0.34px;transform:scaleX(0.990)">OFF-PA-10000249</span></div>
<div class="c " style="left:815.0px;top:687.68px;width:75.1px;height:13.69px"><span class="t" style="top:0.34px;transform:scaleX(1.043)">Office Supplies</span></div>
<div class="c " style="left:891.1px;top:687.68px;width:66.9px;height:13.69px"><span class="t" style="top:0.34px;transform:scaleX(1.091)">Paper</span></div>
<div class="c " style="left:959.0px;top:687.68px;width:140.5px;height:13.69px"><span class="t" style="top:0.34px;transform:scaleX(1.083)">Easy-staple paper</span></div>
<div class="c " style="left:-39.5px;top:701.37px;width:75.7px;height:13.69px"><span class="t r" style="top:0.34px;transform:scaleX(0.957)">10<span style="padding:0 1.25px">/</span>12<span style="padding:0 1.25px">/</span>2016</span></div>
<div class="c " style="left:37.2px;top:701.37px;width:72.9px;height:13.69px"><span class="t" style="top:0.34px;transform:scaleX(1.065)">First Class</span></div>
<div class="c " style="left:111.1px;top:701.37px;width:62.9px;height:13.69px"><span class="t" style="top:0.34px;transform:scaleX(0.991)">GH-14485</span></div>
<div class="c " style="left:175.0px;top:701.37px;width:120.9px;height:13.69px"><span class="t" style="top:0.34px;transform:scaleX(1.059)">Gene Hale</span></div>
<div class="c " style="left:296.9px;top:701.37px;width:62.6px;height:13.69px"><span class="t" style="top:0.34px;transform:scaleX(1.084)">Corporate</span></div>
<div class="c " style="left:360.5px;top:701.37px;width:65.4px;height:13.69px"><span class="t" style="top:0.34px;transform:scaleX(1.072)">United States</span></div>
<div class="c " style="left:426.9px;top:701.37px;width:97.1px;height:13.69px"><span class="t" style="top:0.34px;transform:scaleX(1.069)">Richardson</span></div>
<div class="c " style="left:525.0px;top:701.37px;width:99.0px;height:13.69px"><span class="t" style="top:0.34px;transform:scaleX(1.063)">Texas</span></div>
<div class="c " style="left:625.0px;top:701.37px;width:60.0px;height:13.69px"><span class="t r" style="top:0.34px;transform:scaleX(0.957)">75080</span></div>
<div class="c " style="left:686.0px;top:701.37px;width:37.0px;height:13.69px"><span class="t" style="top:0.34px;transform:scaleX(1.080)">Central</span></div>
<div class="c " style="left:724.0px;top:701.37px;width:90.0px;height:13.69px"><span class="t" style="top:0.34px;transform:scaleX(0.982)">TEC-PH-10004977</span></div>
<div class="c " style="left:815.0px;top:701.37px;width:75.1px;height:13.69px"><span class="t" style="top:0.34px;transform:scaleX(1.059)">Technology</span></div>
<div class="c " style="left:891.1px;top:701.37px;width:66.9px;height:13.69px"><span class="t" style="top:0.34px;transform:scaleX(1.075)">Phones</span></div>
<div class="c " style="left:959.0px;top:701.37px;width:140.5px;height:13.69px"><span class="t" style="top:0.34px;transform:scaleX(0.968)">GE 30524EE4</span></div>
<div class="c " style="left:-39.5px;top:715.05px;width:75.7px;height:13.69px"><span class="t r" style="top:0.34px;transform:scaleX(0.957)">10<span style="padding:0 1.25px">/</span>12<span style="padding:0 1.25px">/</span>2016</span></div>
<div class="c " style="left:37.2px;top:715.05px;width:72.9px;height:13.69px"><span class="t" style="top:0.34px;transform:scaleX(1.065)">First Class</span></div>
<div class="c " style="left:111.1px;top:715.05px;width:62.9px;height:13.69px"><span class="t" style="top:0.34px;transform:scaleX(0.991)">GH-14485</span></div>
<div class="c " style="left:175.0px;top:715.05px;width:120.9px;height:13.69px"><span class="t" style="top:0.34px;transform:scaleX(1.059)">Gene Hale</span></div>
<div class="c " style="left:296.9px;top:715.05px;width:62.6px;height:13.69px"><span class="t" style="top:0.34px;transform:scaleX(1.084)">Corporate</span></div>
<div class="c " style="left:360.5px;top:715.05px;width:65.4px;height:13.69px"><span class="t" style="top:0.34px;transform:scaleX(1.072)">United States</span></div>
<div class="c " style="left:426.9px;top:715.05px;width:97.1px;height:13.69px"><span class="t" style="top:0.34px;transform:scaleX(1.069)">Richardson</span></div>
<div class="c " style="left:525.0px;top:715.05px;width:99.0px;height:13.69px"><span class="t" style="top:0.34px;transform:scaleX(1.063)">Texas</span></div>
<div class="c " style="left:625.0px;top:715.05px;width:60.0px;height:13.69px"><span class="t r" style="top:0.34px;transform:scaleX(0.957)">75080</span></div>
<div class="c " style="left:686.0px;top:715.05px;width:37.0px;height:13.69px"><span class="t" style="top:0.34px;transform:scaleX(1.080)">Central</span></div>
<div class="c " style="left:724.0px;top:715.05px;width:90.0px;height:13.69px"><span class="t" style="top:0.34px;transform:scaleX(0.971)">FUR-FU-10003664</span></div>
<div class="c " style="left:815.0px;top:715.05px;width:75.1px;height:13.69px"><span class="t" style="top:0.34px;transform:scaleX(1.092)">Furniture</span></div>
<div class="c " style="left:891.1px;top:715.05px;width:66.9px;height:13.69px"><span class="t" style="top:0.34px;transform:scaleX(1.082)">Furnishings</span></div>
<div class="c " style="left:959.0px;top:715.05px;width:140.5px;height:13.69px"><span class="t" style="top:0.34px;transform:scaleX(1.064)">Electrix Architect's Clamp-On Swing Arm Lamp</span></div>
<div class="c " style="left:-39.5px;top:728.74px;width:75.7px;height:13.69px"><span class="t r" style="top:0.34px;transform:scaleX(0.957)">31<span style="padding:0 1.25px">/</span>12<span style="padding:0 1.25px">/</span>2015</span></div>
<div class="c " style="left:37.2px;top:728.74px;width:72.9px;height:13.69px"><span class="t" style="top:0.34px;transform:scaleX(1.089)">Standard Class</span></div>
<div class="c " style="left:111.1px;top:728.74px;width:62.9px;height:13.69px"><span class="t" style="top:0.34px;transform:scaleX(0.976)">SN-20710</span></div>
<div class="c " style="left:175.0px;top:728.74px;width:120.9px;height:13.69px"><span class="t" style="top:0.34px;transform:scaleX(1.064)">Steve Nguyen</span></div>
<div class="c " style="left:296.9px;top:728.74px;width:62.6px;height:13.69px"><span class="t" style="top:0.34px;transform:scaleX(1.039)">Home Office</span></div>
<div class="c " style="left:360.5px;top:728.74px;width:65.4px;height:13.69px"><span class="t" style="top:0.34px;transform:scaleX(1.072)">United States</span></div>
<div class="c " style="left:426.9px;top:728.74px;width:97.1px;height:13.69px"><span class="t" style="top:0.34px;transform:scaleX(1.102)">Houston</span></div>
<div class="c " style="left:525.0px;top:728.74px;width:99.0px;height:13.69px"><span class="t" style="top:0.34px;transform:scaleX(1.063)">Texas</span></div>
<div class="c " style="left:625.0px;top:728.74px;width:60.0px;height:13.69px"><span class="t r" style="top:0.34px;transform:scaleX(0.957)">77041</span></div>
<div class="c " style="left:686.0px;top:728.74px;width:37.0px;height:13.69px"><span class="t" style="top:0.34px;transform:scaleX(1.080)">Central</span></div>
<div class="c " style="left:724.0px;top:728.74px;width:90.0px;height:13.69px"><span class="t" style="top:0.34px;transform:scaleX(0.979)">OFF-EN-10002986</span></div>
<div class="c " style="left:815.0px;top:728.74px;width:75.1px;height:13.69px"><span class="t" style="top:0.34px;transform:scaleX(1.043)">Office Supplies</span></div>
<div class="c " style="left:891.1px;top:728.74px;width:66.9px;height:13.69px"><span class="t" style="top:0.34px;transform:scaleX(1.060)">Envelopes</span></div>
<div class="c " style="left:959.0px;top:728.74px;width:140.5px;height:13.69px"><span class="t" style="top:0.34px;transform:scaleX(1.039)">#10-4 1/8 x 9 1/2 Recycled Envelopes</span></div>
<div class="c " style="left:-39.5px;top:742.43px;width:75.7px;height:4.87px"><span class="t r" style="top:0.34px;transform:scaleX(0.957)">31<span style="padding:0 1.25px">/</span>12<span style="padding:0 1.25px">/</span>2015</span></div>
<div class="c " style="left:37.2px;top:742.43px;width:72.9px;height:4.87px"><span class="t" style="top:0.34px;transform:scaleX(1.089)">Standard Class</span></div>
<div class="c " style="left:111.1px;top:742.43px;width:62.9px;height:4.87px"><span class="t" style="top:0.34px;transform:scaleX(0.976)">SN-20710</span></div>
<div class="c " style="left:175.0px;top:742.43px;width:120.9px;height:4.87px"><span class="t" style="top:0.34px;transform:scaleX(1.064)">Steve Nguyen</span></div>
<div class="c " style="left:296.9px;top:742.43px;width:62.6px;height:4.87px"><span class="t" style="top:0.34px;transform:scaleX(1.039)">Home Office</span></div>
<div class="c " style="left:360.5px;top:742.43px;width:65.4px;height:4.87px"><span class="t" style="top:0.34px;transform:scaleX(1.072)">United States</span></div>
<div class="c " style="left:426.9px;top:742.43px;width:97.1px;height:4.87px"><span class="t" style="top:0.34px;transform:scaleX(1.102)">Houston</span></div>
<div class="c " style="left:525.0px;top:742.43px;width:99.0px;height:4.87px"><span class="t" style="top:0.34px;transform:scaleX(1.063)">Texas</span></div>
<div class="c " style="left:625.0px;top:742.43px;width:60.0px;height:4.87px"><span class="t r" style="top:0.34px;transform:scaleX(0.957)">77041</span></div>
<div class="c " style="left:686.0px;top:742.43px;width:37.0px;height:4.87px"><span class="t" style="top:0.34px;transform:scaleX(1.080)">Central</span></div>
<div class="c " style="left:724.0px;top:742.43px;width:90.0px;height:4.87px"><span class="t" style="top:0.34px;transform:scaleX(0.965)">FUR-BO-10002545</span></div>
<div class="c " style="left:815.0px;top:742.43px;width:75.1px;height:4.87px"><span class="t" style="top:0.34px;transform:scaleX(1.092)">Furniture</span></div>
<div class="c " style="left:891.1px;top:742.43px;width:66.9px;height:4.87px"><span class="t" style="top:0.34px;transform:scaleX(1.029)">Bookcases</span></div>
<div class="c " style="left:959.0px;top:742.43px;width:140.5px;height:4.87px"><span class="t" style="top:0.34px;transform:scaleX(1.037)">Atlantic Metals Mobile 3-Shelf Bookcases</span></div>
<svg id="lines" width="1000" height="750" viewBox="0 0 1000 750"><path d="M0 222.25 H1000 M0 235.94 H1000 M0 249.63 H1000 M0 263.32 H1000 M0 277.01 H1000 M0 290.69 H1000 M0 304.38 H1000 M0 318.07 H1000 M0 331.76 H1000 M0 345.45 H1000 M0 359.14 H1000 M0 372.83 H1000 M0 386.52 H1000 M0 400.21 H1000 M0 413.90 H1000 M0 427.59 H1000 M0 441.27 H1000 M0 454.96 H1000 M0 468.65 H1000 M0 482.34 H1000 M0 496.03 H1000 M0 509.72 H1000 M0 523.41 H1000 M0 537.10 H1000 M0 550.79 H1000 M0 564.48 H1000 M0 578.16 H1000 M0 591.85 H1000 M0 605.54 H1000 M0 619.23 H1000 M0 632.92 H1000 M0 646.61 H1000 M0 660.30 H1000 M0 673.99 H1000 M0 687.68 H1000 M0 701.37 H1000 M0 715.05 H1000 M0 728.74 H1000 M0 742.43 H1000" stroke="#2c2c2c" stroke-width="1.1" fill="none"/><path d="M36.70 208.4 V747.3 M110.60 208.4 V747.3 M174.50 208.4 V747.3 M296.40 208.4 V747.3 M360.00 208.4 V747.3 M426.40 208.4 V747.3 M524.50 208.4 V747.3 M624.50 208.4 V747.3 M685.50 208.4 V747.3 M723.50 208.4 V747.3 M814.50 208.4 V747.3 M890.60 208.4 V747.3 M958.50 208.4 V747.3" stroke="#242424" stroke-width="1.15" fill="none"/></svg>
<div id="selline"></div><div id="selbox"></div><div id="selh"></div>
</div>
<div id="botbar"><div id="botl"></div></div>
</body></html>
